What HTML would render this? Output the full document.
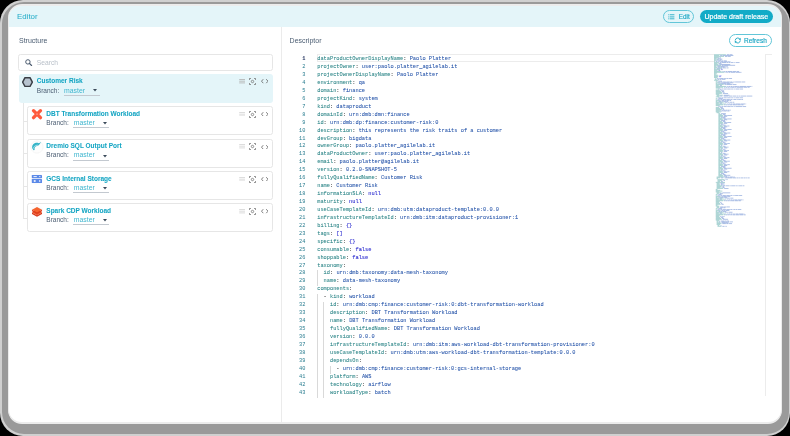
<!DOCTYPE html>
<html><head><meta charset="utf-8">
<style>
*{margin:0;padding:0;box-sizing:border-box}
html,body{width:790px;height:436px;overflow:hidden;background:#000}
body{position:relative;font-family:"Liberation Sans",sans-serif}
.a{position:absolute}
.ring{left:0;top:0;width:790px;height:436px;border-radius:23px;background:#d0d0d0}
.shadow{left:1.5px;top:1.5px;width:787px;height:432px;border-radius:22px;background:#9a9a9a}
.card{left:8px;top:3.5px;width:774px;height:420.5px;border-radius:14px;background:#fff;border:1.5px solid #ececec;border-top-width:2px;border-bottom-width:2px;overflow:hidden}
.hdr{left:0;top:0;width:100%;height:21px;background:#e4f5f9}
.t{position:absolute;white-space:nowrap;line-height:1}
.teal{color:#14a5c3}
.lab{color:#4b5d72}
.btn-o{border:0.8px solid #62c6d8;border-radius:7px}
.btn-f{background:#12abc7;border-radius:7px}
.box{border:1px solid #e6e6e6;border-radius:2.5px;background:#fff}
.row{background:#e4f5f9;border-radius:3px}
.ln{position:absolute;left:281.5px;width:24px;text-align:right;font-family:"Liberation Mono",monospace;font-size:5.32px;line-height:7.94px;color:#2a7d90;white-space:pre}
.ln.cur{color:#1d2d5a;font-weight:bold}
.cl{position:absolute;left:317.2px;font-family:"Liberation Mono",monospace;font-size:5.32px;line-height:7.94px;white-space:pre;color:#333}
.cl .k{color:#2a8486;-webkit-text-stroke:0.05px #2a8486}
.cl .v{color:#2352a8;-webkit-text-stroke:0.05px #2352a8}
.cl .c{color:#2f2fd0;-webkit-text-stroke:0.1px #2f2fd0}
.cl .p{color:#222;-webkit-text-stroke:0.1px #222}
.ig{position:absolute;width:0.6px;background:#d9d9d9}
.ic{position:absolute}
</style></head>
<body>
<div class="a" style="left:0;top:0;width:790px;height:436px;will-change:transform">
<div class="a ring"></div>
<div class="a shadow"></div>
<div class="a card">
  <div class="a hdr"></div>
</div>

<!-- header -->
<div class="t teal" style="left:17px;top:12.9px;font-size:7.9px;color:#22acc8">Editor</div>
<div class="a btn-o" style="left:663.4px;top:10.2px;width:30.6px;height:12.4px"></div>
<svg class="ic" style="left:667.5px;top:13.5px" width="7" height="6" viewBox="0 0 7 6">
  <g stroke="#1aa9c4" stroke-width="0.85">
  <line x1="0.3" y1="0.75" x2="1.1" y2="0.75"/><line x1="1.7" y1="0.75" x2="6.4" y2="0.75"/>
  <line x1="0.3" y1="2.9" x2="1.1" y2="2.9"/><line x1="1.7" y1="2.9" x2="6.4" y2="2.9"/>
  <line x1="0.3" y1="4.8" x2="1.1" y2="4.8"/><line x1="1.7" y1="4.8" x2="6.4" y2="4.8"/></g>
</svg>
<div class="t teal" style="left:678.7px;top:13.6px;font-size:6.4px;font-weight:normal;-webkit-text-stroke:0.12px #1aa9c4">Edit</div>
<div class="a btn-f" style="left:699.8px;top:10px;width:73.3px;height:12.8px"></div>
<div class="t" style="left:704.4px;top:12.8px;font-size:7.05px;color:#fff;-webkit-text-stroke:0.2px #fff">Update draft release</div>

<!-- structure panel -->
<div class="t lab" style="left:19px;top:37.2px;font-size:7px">Structure</div>
<div class="a box" style="left:18px;top:54px;width:255px;height:17px"></div>
<svg class="ic" style="left:25px;top:59.2px" width="7.5" height="7" viewBox="0 0 7.5 7">
  <circle cx="2.9" cy="2.9" r="2.2" fill="none" stroke="#4a5a6e" stroke-width="1"/>
  <line x1="4.5" y1="4.5" x2="6.6" y2="6.5" stroke="#4a5a6e" stroke-width="1.1" stroke-linecap="round"/>
</svg>
<div class="t" style="left:36.8px;top:60.2px;font-size:6.7px;color:#b9c0c9">Search</div>

<div class="a row" style="left:19px;top:74px;width:254px;height:29px"></div>
<svg class="ic" style="left:22px;top:76.6px" width="11" height="10.2" viewBox="0 0 11 10.2">
  <polygon points="3,0.7 8,0.7 10.4,5.1 8,9.5 3,9.5 0.6,5.1" fill="#b7c3cf" stroke="#3a3e45" stroke-width="1.5" stroke-linejoin="round"/>
</svg>
<div class="t teal" style="left:36.8px;top:78.4px;font-size:6.5px;font-weight:bold;-webkit-text-stroke:0.05px #14a5c3">Customer Risk</div>
<div class="t lab" style="left:36.8px;top:88.1px;font-size:6.5px">Branch:</div>
<div class="t teal" style="left:64px;top:88.1px;font-size:6.9px;color:#3fb6cf">master</div>
<svg class="ic" style="left:92.8px;top:88.6px" width="4" height="3" viewBox="0 0 4 3"><polygon points="0,0 4,0 2,2.4" fill="#3b4a5a"/></svg>
<div class="a" style="left:64px;top:94.9px;width:36.2px;height:0.7px;background:#c3c9d0"></div>

<div class="a" style="left:230px;top:74px;width:0;height:0"></div>

<svg class="ic" style="left:238.6px;top:79.00px" width="6.5" height="4.5" viewBox="0 0 6.5 4.5"><g stroke="#b0b0b0" stroke-width="0.8"><line x1="0.2" y1="0.5" x2="6.2" y2="0.5"/><line x1="0.2" y1="2.2" x2="6.2" y2="2.2"/><line x1="0.2" y1="3.9" x2="6.2" y2="3.9"/></g></svg><svg class="ic" style="left:249.4px;top:77.80px" width="7" height="7" viewBox="0 0 7 7"><g fill="none" stroke="#6e6e6e" stroke-width="0.8"><path d="M0.4 2 V0.4 H2 M5 0.4 H6.6 V2 M6.6 5 V6.6 H5 M2 6.6 H0.4 V5"/></g><circle cx="3.5" cy="3.5" r="1.2" fill="none" stroke="#777" stroke-width="0.8"/></svg>
<svg class="ic" style="left:260.6px;top:79.20px" width="7.5" height="4.4" viewBox="0 0 7.5 4.4"><g fill="none" stroke="#5e5e5e" stroke-width="0.8" stroke-linecap="round" stroke-linejoin="round"><path d="M2 0.5 L0.5 2.2 L2 3.9 M5.5 0.5 L7 2.2 L5.5 3.9"/></g></svg>
<div class="a" style="left:23px;top:102.5px;width:0.7px;height:115.5px;background:#e6e6e6"></div>
<div class="a box" style="left:27px;top:106px;width:246px;height:29px"></div>
<div class="a" style="left:23px;top:120.60px;width:4.2px;height:0.7px;background:#e6e6e6"></div>
<svg class="ic" style="left:30px;top:107.00px" width="14" height="14" viewBox="0 0 14 14"><circle cx="7" cy="7" r="6.2" fill="#fbfcfd"/><g stroke="#fe5a3c" stroke-width="3.3" stroke-linecap="round"><line x1="3.5" y1="3.7" x2="10.5" y2="10.7"/><line x1="10.5" y1="3.7" x2="3.5" y2="10.7"/></g><rect x="6.4" y="6.6" width="1.2" height="1" fill="#ffc6b8"/></svg>
<div class="t teal" style="left:46.3px;top:110.80px;font-size:6.5px;font-weight:bold;-webkit-text-stroke:0.05px #14a5c3">DBT Transformation Workload</div>
<div class="t lab" style="left:46.3px;top:119.70px;font-size:6.5px">Branch:</div>
<div class="t teal" style="left:73.8px;top:119.70px;font-size:6.9px;color:#3fb6cf">master</div>
<svg class="ic" style="left:102.5px;top:122.00px" width="4" height="3" viewBox="0 0 4 3"><polygon points="0,0 4,0 2,2.4" fill="#3b4a5a"/></svg>
<div class="a" style="left:73.1px;top:126.90px;width:36.1px;height:0.7px;background:#c3c9d0"></div>
<svg class="ic" style="left:238.6px;top:111.80px" width="6.5" height="4.5" viewBox="0 0 6.5 4.5"><g stroke="#d4d4d4" stroke-width="0.8"><line x1="0.2" y1="0.5" x2="6.2" y2="0.5"/><line x1="0.2" y1="2.2" x2="6.2" y2="2.2"/><line x1="0.2" y1="3.9" x2="6.2" y2="3.9"/></g></svg><svg class="ic" style="left:249.4px;top:110.60px" width="7" height="7" viewBox="0 0 7 7"><g fill="none" stroke="#6e6e6e" stroke-width="0.8"><path d="M0.4 2 V0.4 H2 M5 0.4 H6.6 V2 M6.6 5 V6.6 H5 M2 6.6 H0.4 V5"/></g><circle cx="3.5" cy="3.5" r="1.2" fill="none" stroke="#777" stroke-width="0.8"/></svg>
<svg class="ic" style="left:260.6px;top:112.00px" width="7.5" height="4.4" viewBox="0 0 7.5 4.4"><g fill="none" stroke="#5e5e5e" stroke-width="0.8" stroke-linecap="round" stroke-linejoin="round"><path d="M2 0.5 L0.5 2.2 L2 3.9 M5.5 0.5 L7 2.2 L5.5 3.9"/></g></svg>
<div class="a box" style="left:27px;top:139px;width:246px;height:29px"></div>
<div class="a" style="left:23px;top:153.20px;width:4.2px;height:0.7px;background:#e6e6e6"></div>
<svg class="ic" style="left:30px;top:139.60px" width="14" height="14" viewBox="0 0 14 14"><circle cx="7" cy="7" r="6.2" fill="#fdfdfd" stroke="#ececec" stroke-width="0.5"/><g transform="translate(0,-0.7)"><path d="M3.6 11 C1.6 9.6 1.6 6.4 3.4 4.8 C5 3.4 7.2 3.2 8.8 3.9 L11.2 2.8 L9.9 4.5 C9.2 6 7.6 6.5 6.3 7 C5 7.5 4.3 8.8 4.6 10.6 Z" fill="#36b4c8"/><path d="M3.4 9.2 C3.6 7.6 4.8 6.3 7.6 5.7" stroke="#e6f6f8" stroke-width="0.6" fill="none"/></g></svg>
<div class="t teal" style="left:46.3px;top:143.40px;font-size:6.5px;font-weight:bold;-webkit-text-stroke:0.05px #14a5c3">Dremio SQL Output Port</div>
<div class="t lab" style="left:46.3px;top:152.30px;font-size:6.5px">Branch:</div>
<div class="t teal" style="left:73.8px;top:152.30px;font-size:6.9px;color:#3fb6cf">master</div>
<svg class="ic" style="left:102.5px;top:154.60px" width="4" height="3" viewBox="0 0 4 3"><polygon points="0,0 4,0 2,2.4" fill="#3b4a5a"/></svg>
<div class="a" style="left:73.1px;top:159.50px;width:36.1px;height:0.7px;background:#c3c9d0"></div>
<svg class="ic" style="left:238.6px;top:144.40px" width="6.5" height="4.5" viewBox="0 0 6.5 4.5"><g stroke="#d4d4d4" stroke-width="0.8"><line x1="0.2" y1="0.5" x2="6.2" y2="0.5"/><line x1="0.2" y1="2.2" x2="6.2" y2="2.2"/><line x1="0.2" y1="3.9" x2="6.2" y2="3.9"/></g></svg><svg class="ic" style="left:249.4px;top:143.20px" width="7" height="7" viewBox="0 0 7 7"><g fill="none" stroke="#6e6e6e" stroke-width="0.8"><path d="M0.4 2 V0.4 H2 M5 0.4 H6.6 V2 M6.6 5 V6.6 H5 M2 6.6 H0.4 V5"/></g><circle cx="3.5" cy="3.5" r="1.2" fill="none" stroke="#777" stroke-width="0.8"/></svg>
<svg class="ic" style="left:260.6px;top:144.60px" width="7.5" height="4.4" viewBox="0 0 7.5 4.4"><g fill="none" stroke="#5e5e5e" stroke-width="0.8" stroke-linecap="round" stroke-linejoin="round"><path d="M2 0.5 L0.5 2.2 L2 3.9 M5.5 0.5 L7 2.2 L5.5 3.9"/></g></svg>
<div class="a box" style="left:27px;top:171px;width:246px;height:29px"></div>
<div class="a" style="left:23px;top:185.60px;width:4.2px;height:0.7px;background:#e6e6e6"></div>
<svg class="ic" style="left:30px;top:172.00px" width="14" height="14" viewBox="0 0 14 14"><circle cx="7" cy="7" r="6.2" fill="#fbfcfd"/><rect x="1.8" y="2.9" width="10.2" height="3.3" rx="0.6" fill="#5b89e8"/><rect x="1.8" y="6.9" width="10.2" height="4.2" rx="0.6" fill="#5b89e8"/><g fill="#dfe8fb"><rect x="3.5" y="4" width="3.3" height="1.1"/><rect x="9.2" y="4" width="1.2" height="1.1"/><rect x="3.8" y="8" width="1.8" height="2"/><rect x="9.2" y="8" width="1.1" height="2"/></g></svg>
<div class="t teal" style="left:46.3px;top:175.80px;font-size:6.5px;font-weight:bold;-webkit-text-stroke:0.05px #14a5c3">GCS Internal Storage</div>
<div class="t lab" style="left:46.3px;top:184.70px;font-size:6.5px">Branch:</div>
<div class="t teal" style="left:73.8px;top:184.70px;font-size:6.9px;color:#3fb6cf">master</div>
<svg class="ic" style="left:102.5px;top:187.00px" width="4" height="3" viewBox="0 0 4 3"><polygon points="0,0 4,0 2,2.4" fill="#3b4a5a"/></svg>
<div class="a" style="left:73.1px;top:191.90px;width:36.1px;height:0.7px;background:#c3c9d0"></div>
<svg class="ic" style="left:238.6px;top:176.80px" width="6.5" height="4.5" viewBox="0 0 6.5 4.5"><g stroke="#d4d4d4" stroke-width="0.8"><line x1="0.2" y1="0.5" x2="6.2" y2="0.5"/><line x1="0.2" y1="2.2" x2="6.2" y2="2.2"/><line x1="0.2" y1="3.9" x2="6.2" y2="3.9"/></g></svg><svg class="ic" style="left:249.4px;top:175.60px" width="7" height="7" viewBox="0 0 7 7"><g fill="none" stroke="#6e6e6e" stroke-width="0.8"><path d="M0.4 2 V0.4 H2 M5 0.4 H6.6 V2 M6.6 5 V6.6 H5 M2 6.6 H0.4 V5"/></g><circle cx="3.5" cy="3.5" r="1.2" fill="none" stroke="#777" stroke-width="0.8"/></svg>
<svg class="ic" style="left:260.6px;top:177.00px" width="7.5" height="4.4" viewBox="0 0 7.5 4.4"><g fill="none" stroke="#5e5e5e" stroke-width="0.8" stroke-linecap="round" stroke-linejoin="round"><path d="M2 0.5 L0.5 2.2 L2 3.9 M5.5 0.5 L7 2.2 L5.5 3.9"/></g></svg>
<div class="a box" style="left:27px;top:203px;width:246px;height:29px"></div>
<div class="a" style="left:23px;top:217.90px;width:4.2px;height:0.7px;background:#e6e6e6"></div>
<svg class="ic" style="left:30px;top:204.30px" width="14" height="14" viewBox="0 0 14 14"><circle cx="7" cy="7" r="6.2" fill="#fbfcfd"/><path d="M7 5.6 L12 8.4 L7 11.2 L2 8.4 Z" fill="#f0552a"/><path d="M2 8.4 L7 11.2 L12 8.4 L12 9.9 L7 12.8 L2 9.9 Z" fill="#d9391a"/><path d="M7 2.9 L12 5.8 L7 8.6 L2 5.8 Z" fill="#f5642f"/><path d="M2 5.8 L7 8.6 L12 5.8 L12 7.2 L7 10 L2 7.2 Z" fill="#dd3d1c"/></svg>
<div class="t teal" style="left:46.3px;top:208.10px;font-size:6.5px;font-weight:bold;-webkit-text-stroke:0.05px #14a5c3">Spark CDP Workload</div>
<div class="t lab" style="left:46.3px;top:217.00px;font-size:6.5px">Branch:</div>
<div class="t teal" style="left:73.8px;top:217.00px;font-size:6.9px;color:#3fb6cf">master</div>
<svg class="ic" style="left:102.5px;top:219.30px" width="4" height="3" viewBox="0 0 4 3"><polygon points="0,0 4,0 2,2.4" fill="#3b4a5a"/></svg>
<div class="a" style="left:73.1px;top:224.20px;width:36.1px;height:0.7px;background:#c3c9d0"></div>
<svg class="ic" style="left:238.6px;top:209.10px" width="6.5" height="4.5" viewBox="0 0 6.5 4.5"><g stroke="#d4d4d4" stroke-width="0.8"><line x1="0.2" y1="0.5" x2="6.2" y2="0.5"/><line x1="0.2" y1="2.2" x2="6.2" y2="2.2"/><line x1="0.2" y1="3.9" x2="6.2" y2="3.9"/></g></svg><svg class="ic" style="left:249.4px;top:207.90px" width="7" height="7" viewBox="0 0 7 7"><g fill="none" stroke="#6e6e6e" stroke-width="0.8"><path d="M0.4 2 V0.4 H2 M5 0.4 H6.6 V2 M6.6 5 V6.6 H5 M2 6.6 H0.4 V5"/></g><circle cx="3.5" cy="3.5" r="1.2" fill="none" stroke="#777" stroke-width="0.8"/></svg>
<svg class="ic" style="left:260.6px;top:209.30px" width="7.5" height="4.4" viewBox="0 0 7.5 4.4"><g fill="none" stroke="#5e5e5e" stroke-width="0.8" stroke-linecap="round" stroke-linejoin="round"><path d="M2 0.5 L0.5 2.2 L2 3.9 M5.5 0.5 L7 2.2 L5.5 3.9"/></g></svg>

<!-- divider -->
<div class="a" style="left:281.2px;top:26.5px;width:0.8px;height:396px;background:#ebebeb"></div>

<!-- descriptor -->
<div class="t lab" style="left:289.6px;top:37.2px;font-size:7px">Descriptor</div>
<div class="a btn-o" style="left:728.9px;top:34.2px;width:43.1px;height:12.5px"></div>
<svg class="ic" style="left:734px;top:37px" width="7.5" height="7" viewBox="0 0 7.5 7">
  <path d="M1.2 3.2 A2.6 2.6 0 0 1 6 2.2 M6.3 3.8 A2.6 2.6 0 0 1 1.5 4.8" fill="none" stroke="#1ba8c3" stroke-width="0.9" stroke-linecap="round"/>
  <polygon points="6.6,0.8 6.6,3 4.6,2.6" fill="#1ba8c3"/>
  <polygon points="0.9,6.2 0.9,4 2.9,4.4" fill="#1ba8c3"/>
</svg>
<div class="t teal" style="left:744px;top:37.8px;font-size:6.5px;-webkit-text-stroke:0.15px #20aac6">Refresh</div>

<!-- editor -->
<div class="a" style="left:317px;top:54px;width:397px;height:8px;border:1px solid #ececec;border-right:none"></div>
<div class="a" style="left:765.3px;top:54.2px;width:0.7px;height:342px;background:#ececec"></div>
<div class="a" style="left:765.3px;top:54.2px;width:7px;height:0.7px;background:#ececec"></div>
<div class="a" style="left:0;top:0;width:790px;height:436px;will-change:transform">
<div class="ig" style="left:317.0px;top:270.48px;height:15.88px"></div>
<div class="ig" style="left:317.0px;top:294.30px;height:103.22px"></div>
<div class="ig" style="left:323.2px;top:302.24px;height:95.28px"></div>
<div class="ig" style="left:329.6px;top:365.76px;height:7.94px"></div>
<div class="ln cur" style="top:56.10px">1</div>
<div class="cl" style="top:56.10px"><span class="k">dataProductOwnerDisplayName</span><span class="p">:</span> <span class="v">Paolo Platter</span></div>
<div class="ln" style="top:64.04px">2</div>
<div class="cl" style="top:64.04px"><span class="k">projectOwner</span><span class="p">:</span> <span class="v">user:paolo.platter_agilelab.it</span></div>
<div class="ln" style="top:71.98px">3</div>
<div class="cl" style="top:71.98px"><span class="k">projectOwnerDisplayName</span><span class="p">:</span> <span class="v">Paolo Platter</span></div>
<div class="ln" style="top:79.92px">4</div>
<div class="cl" style="top:79.92px"><span class="k">environment</span><span class="p">:</span> <span class="v">qa</span></div>
<div class="ln" style="top:87.86px">5</div>
<div class="cl" style="top:87.86px"><span class="k">domain</span><span class="p">:</span> <span class="v">finance</span></div>
<div class="ln" style="top:95.80px">6</div>
<div class="cl" style="top:95.80px"><span class="k">projectKind</span><span class="p">:</span> <span class="v">system</span></div>
<div class="ln" style="top:103.74px">7</div>
<div class="cl" style="top:103.74px"><span class="k">kind</span><span class="p">:</span> <span class="v">dataproduct</span></div>
<div class="ln" style="top:111.68px">8</div>
<div class="cl" style="top:111.68px"><span class="k">domainId</span><span class="p">:</span> <span class="v">urn:dmb:dmn:finance</span></div>
<div class="ln" style="top:119.62px">9</div>
<div class="cl" style="top:119.62px"><span class="k">id</span><span class="p">:</span> <span class="v">urn:dmb:dp:finance:customer-risk:0</span></div>
<div class="ln" style="top:127.56px">10</div>
<div class="cl" style="top:127.56px"><span class="k">description</span><span class="p">:</span> <span class="v">this represents the risk traits of a customer</span></div>
<div class="ln" style="top:135.50px">11</div>
<div class="cl" style="top:135.50px"><span class="k">devGroup</span><span class="p">:</span> <span class="v">bigdata</span></div>
<div class="ln" style="top:143.44px">12</div>
<div class="cl" style="top:143.44px"><span class="k">ownerGroup</span><span class="p">:</span> <span class="v">paolo.platter_agilelab.it</span></div>
<div class="ln" style="top:151.38px">13</div>
<div class="cl" style="top:151.38px"><span class="k">dataProductOwner</span><span class="p">:</span> <span class="v">user:paolo.platter_agilelab.it</span></div>
<div class="ln" style="top:159.32px">14</div>
<div class="cl" style="top:159.32px"><span class="k">email</span><span class="p">:</span> <span class="v">paolo.platter@agilelab.it</span></div>
<div class="ln" style="top:167.26px">15</div>
<div class="cl" style="top:167.26px"><span class="k">version</span><span class="p">:</span> <span class="v">0.2.0-SNAPSHOT-5</span></div>
<div class="ln" style="top:175.20px">16</div>
<div class="cl" style="top:175.20px"><span class="k">fullyQualifiedName</span><span class="p">:</span> <span class="v">Customer Risk</span></div>
<div class="ln" style="top:183.14px">17</div>
<div class="cl" style="top:183.14px"><span class="k">name</span><span class="p">:</span> <span class="v">Customer Risk</span></div>
<div class="ln" style="top:191.08px">18</div>
<div class="cl" style="top:191.08px"><span class="k">informationSLA</span><span class="p">:</span> <span class="c">null</span></div>
<div class="ln" style="top:199.02px">19</div>
<div class="cl" style="top:199.02px"><span class="k">maturity</span><span class="p">:</span> <span class="c">null</span></div>
<div class="ln" style="top:206.96px">20</div>
<div class="cl" style="top:206.96px"><span class="k">useCaseTemplateId</span><span class="p">:</span> <span class="v">urn:dmb:utm:dataproduct-template:0.0.0</span></div>
<div class="ln" style="top:214.90px">21</div>
<div class="cl" style="top:214.90px"><span class="k">infrastructureTemplateId</span><span class="p">:</span> <span class="v">urn:dmb:itm:dataproduct-provisioner:1</span></div>
<div class="ln" style="top:222.84px">22</div>
<div class="cl" style="top:222.84px"><span class="k">billing</span><span class="p">:</span> <span class="c">{}</span></div>
<div class="ln" style="top:230.78px">23</div>
<div class="cl" style="top:230.78px"><span class="k">tags</span><span class="p">:</span> <span class="c">[]</span></div>
<div class="ln" style="top:238.72px">24</div>
<div class="cl" style="top:238.72px"><span class="k">specific</span><span class="p">:</span> <span class="c">{}</span></div>
<div class="ln" style="top:246.66px">25</div>
<div class="cl" style="top:246.66px"><span class="k">consumable</span><span class="p">:</span> <span class="c">false</span></div>
<div class="ln" style="top:254.60px">26</div>
<div class="cl" style="top:254.60px"><span class="k">shoppable</span><span class="p">:</span> <span class="c">false</span></div>
<div class="ln" style="top:262.54px">27</div>
<div class="cl" style="top:262.54px"><span class="k">taxonomy</span><span class="p">:</span></div>
<div class="ln" style="top:270.48px">28</div>
<div class="cl" style="top:270.48px">&nbsp;&nbsp;<span class="k">id</span><span class="p">:</span> <span class="v">urn:dmb:taxonomy:data-mesh-taxonomy</span></div>
<div class="ln" style="top:278.42px">29</div>
<div class="cl" style="top:278.42px">&nbsp;&nbsp;<span class="k">name</span><span class="p">:</span> <span class="v">data-mesh-taxonomy</span></div>
<div class="ln" style="top:286.36px">30</div>
<div class="cl" style="top:286.36px"><span class="k">components</span><span class="p">:</span></div>
<div class="ln" style="top:294.30px">31</div>
<div class="cl" style="top:294.30px">&nbsp;&nbsp;<span class="p">- </span><span class="k">kind</span><span class="p">:</span> <span class="v">workload</span></div>
<div class="ln" style="top:302.24px">32</div>
<div class="cl" style="top:302.24px">&nbsp;&nbsp;&nbsp;&nbsp;<span class="k">id</span><span class="p">:</span> <span class="v">urn:dmb:cmp:finance:customer-risk:0:dbt-transformation-workload</span></div>
<div class="ln" style="top:310.18px">33</div>
<div class="cl" style="top:310.18px">&nbsp;&nbsp;&nbsp;&nbsp;<span class="k">description</span><span class="p">:</span> <span class="v">DBT Transformation Workload</span></div>
<div class="ln" style="top:318.12px">34</div>
<div class="cl" style="top:318.12px">&nbsp;&nbsp;&nbsp;&nbsp;<span class="k">name</span><span class="p">:</span> <span class="v">DBT Transformation Workload</span></div>
<div class="ln" style="top:326.06px">35</div>
<div class="cl" style="top:326.06px">&nbsp;&nbsp;&nbsp;&nbsp;<span class="k">fullyQualifiedName</span><span class="p">:</span> <span class="v">DBT Transformation Workload</span></div>
<div class="ln" style="top:334.00px">36</div>
<div class="cl" style="top:334.00px">&nbsp;&nbsp;&nbsp;&nbsp;<span class="k">version</span><span class="p">:</span> <span class="v">0.0.0</span></div>
<div class="ln" style="top:341.94px">37</div>
<div class="cl" style="top:341.94px">&nbsp;&nbsp;&nbsp;&nbsp;<span class="k">infrastructureTemplateId</span><span class="p">:</span> <span class="v">urn:dmb:itm:aws-workload-dbt-transformation-provisioner:0</span></div>
<div class="ln" style="top:349.88px">38</div>
<div class="cl" style="top:349.88px">&nbsp;&nbsp;&nbsp;&nbsp;<span class="k">useCaseTemplateId</span><span class="p">:</span> <span class="v">urn:dmb:utm:aws-workload-dbt-transformation-template:0.0.0</span></div>
<div class="ln" style="top:357.82px">39</div>
<div class="cl" style="top:357.82px">&nbsp;&nbsp;&nbsp;&nbsp;<span class="k">dependsOn</span><span class="p">:</span></div>
<div class="ln" style="top:365.76px">40</div>
<div class="cl" style="top:365.76px">&nbsp;&nbsp;&nbsp;&nbsp;&nbsp;&nbsp;<span class="p">- </span><span class="v">urn:dmb:cmp:finance:customer-risk:0:gcs-internal-storage</span></div>
<div class="ln" style="top:373.70px">41</div>
<div class="cl" style="top:373.70px">&nbsp;&nbsp;&nbsp;&nbsp;<span class="k">platform</span><span class="p">:</span> <span class="v">AWS</span></div>
<div class="ln" style="top:381.64px">42</div>
<div class="cl" style="top:381.64px">&nbsp;&nbsp;&nbsp;&nbsp;<span class="k">technology</span><span class="p">:</span> <span class="v">airflow</span></div>
<div class="ln" style="top:389.58px">43</div>
<div class="cl" style="top:389.58px">&nbsp;&nbsp;&nbsp;&nbsp;<span class="k">workloadType</span><span class="p">:</span> <span class="v">batch</span></div>
</div>
<svg class="ic" style="left:0;top:0" width="790" height="436"><rect x="714.00" y="54.30" width="11.88" height="0.8" fill="#3f9e9e" fill-opacity="0.5"/><rect x="726.76" y="54.30" width="2.20" height="0.8" fill="#3f6cc4" fill-opacity="0.5"/><rect x="729.40" y="54.30" width="3.08" height="0.8" fill="#3f6cc4" fill-opacity="0.5"/><rect x="714.00" y="55.18" width="5.28" height="0.8" fill="#3f9e9e" fill-opacity="0.5"/><rect x="720.16" y="55.18" width="1.76" height="0.8" fill="#3f6cc4" fill-opacity="0.5"/><rect x="722.36" y="55.18" width="11.00" height="0.8" fill="#3f6cc4" fill-opacity="0.5"/><rect x="714.00" y="56.06" width="10.12" height="0.8" fill="#3f9e9e" fill-opacity="0.5"/><rect x="725.00" y="56.06" width="2.20" height="0.8" fill="#3f6cc4" fill-opacity="0.5"/><rect x="727.64" y="56.06" width="3.08" height="0.8" fill="#3f6cc4" fill-opacity="0.5"/><rect x="714.00" y="56.94" width="4.84" height="0.8" fill="#3f9e9e" fill-opacity="0.5"/><rect x="719.72" y="56.94" width="0.88" height="0.8" fill="#3f6cc4" fill-opacity="0.5"/><rect x="714.00" y="57.82" width="2.64" height="0.8" fill="#3f9e9e" fill-opacity="0.5"/><rect x="717.52" y="57.82" width="3.08" height="0.8" fill="#3f6cc4" fill-opacity="0.5"/><rect x="714.00" y="58.70" width="4.84" height="0.8" fill="#3f9e9e" fill-opacity="0.5"/><rect x="719.72" y="58.70" width="2.64" height="0.8" fill="#3f6cc4" fill-opacity="0.5"/><rect x="714.00" y="59.58" width="1.76" height="0.8" fill="#3f9e9e" fill-opacity="0.5"/><rect x="716.64" y="59.58" width="4.84" height="0.8" fill="#3f6cc4" fill-opacity="0.5"/><rect x="714.00" y="60.46" width="3.52" height="0.8" fill="#3f9e9e" fill-opacity="0.5"/><rect x="718.40" y="60.46" width="1.32" height="0.8" fill="#3f6cc4" fill-opacity="0.5"/><rect x="720.16" y="60.46" width="1.32" height="0.8" fill="#3f6cc4" fill-opacity="0.5"/><rect x="721.92" y="60.46" width="1.32" height="0.8" fill="#3f6cc4" fill-opacity="0.5"/><rect x="723.68" y="60.46" width="3.08" height="0.8" fill="#3f6cc4" fill-opacity="0.5"/><rect x="714.00" y="61.34" width="0.88" height="0.8" fill="#3f9e9e" fill-opacity="0.5"/><rect x="715.76" y="61.34" width="1.32" height="0.8" fill="#3f6cc4" fill-opacity="0.5"/><rect x="717.52" y="61.34" width="1.32" height="0.8" fill="#3f6cc4" fill-opacity="0.5"/><rect x="719.28" y="61.34" width="0.88" height="0.8" fill="#3f6cc4" fill-opacity="0.5"/><rect x="720.60" y="61.34" width="3.08" height="0.8" fill="#3f6cc4" fill-opacity="0.5"/><rect x="724.12" y="61.34" width="3.52" height="0.8" fill="#3f6cc4" fill-opacity="0.5"/><rect x="728.08" y="61.34" width="1.76" height="0.8" fill="#3f6cc4" fill-opacity="0.5"/><rect x="730.28" y="61.34" width="0.44" height="0.8" fill="#3f6cc4" fill-opacity="0.5"/><rect x="714.00" y="62.22" width="4.84" height="0.8" fill="#3f9e9e" fill-opacity="0.5"/><rect x="719.72" y="62.22" width="1.76" height="0.8" fill="#3f6cc4" fill-opacity="0.5"/><rect x="721.92" y="62.22" width="4.40" height="0.8" fill="#3f6cc4" fill-opacity="0.5"/><rect x="726.76" y="62.22" width="1.32" height="0.8" fill="#3f6cc4" fill-opacity="0.5"/><rect x="728.52" y="62.22" width="1.76" height="0.8" fill="#3f6cc4" fill-opacity="0.5"/><rect x="730.72" y="62.22" width="2.64" height="0.8" fill="#3f6cc4" fill-opacity="0.5"/><rect x="733.80" y="62.22" width="0.88" height="0.8" fill="#3f6cc4" fill-opacity="0.5"/><rect x="735.12" y="62.22" width="0.44" height="0.8" fill="#3f6cc4" fill-opacity="0.5"/><rect x="736.00" y="62.22" width="3.52" height="0.8" fill="#3f6cc4" fill-opacity="0.5"/><rect x="714.00" y="63.10" width="3.52" height="0.8" fill="#3f9e9e" fill-opacity="0.5"/><rect x="718.40" y="63.10" width="3.08" height="0.8" fill="#3f6cc4" fill-opacity="0.5"/><rect x="714.00" y="63.98" width="4.40" height="0.8" fill="#3f9e9e" fill-opacity="0.5"/><rect x="719.28" y="63.98" width="11.00" height="0.8" fill="#3f6cc4" fill-opacity="0.5"/><rect x="714.00" y="64.86" width="7.04" height="0.8" fill="#3f9e9e" fill-opacity="0.5"/><rect x="721.92" y="64.86" width="1.76" height="0.8" fill="#3f6cc4" fill-opacity="0.5"/><rect x="724.12" y="64.86" width="11.00" height="0.8" fill="#3f6cc4" fill-opacity="0.5"/><rect x="714.00" y="65.74" width="2.20" height="0.8" fill="#3f9e9e" fill-opacity="0.5"/><rect x="717.08" y="65.74" width="11.00" height="0.8" fill="#3f6cc4" fill-opacity="0.5"/><rect x="714.00" y="66.62" width="3.08" height="0.8" fill="#3f9e9e" fill-opacity="0.5"/><rect x="717.96" y="66.62" width="2.20" height="0.8" fill="#3f6cc4" fill-opacity="0.5"/><rect x="720.60" y="66.62" width="3.52" height="0.8" fill="#3f6cc4" fill-opacity="0.5"/><rect x="724.56" y="66.62" width="0.44" height="0.8" fill="#3f6cc4" fill-opacity="0.5"/><rect x="714.00" y="67.50" width="7.92" height="0.8" fill="#3f9e9e" fill-opacity="0.5"/><rect x="722.80" y="67.50" width="3.52" height="0.8" fill="#3f6cc4" fill-opacity="0.5"/><rect x="726.76" y="67.50" width="1.76" height="0.8" fill="#3f6cc4" fill-opacity="0.5"/><rect x="714.00" y="68.38" width="1.76" height="0.8" fill="#3f9e9e" fill-opacity="0.5"/><rect x="716.64" y="68.38" width="3.52" height="0.8" fill="#3f6cc4" fill-opacity="0.5"/><rect x="720.60" y="68.38" width="1.76" height="0.8" fill="#3f6cc4" fill-opacity="0.5"/><rect x="714.00" y="69.26" width="6.16" height="0.8" fill="#3f9e9e" fill-opacity="0.5"/><rect x="721.04" y="69.26" width="1.76" height="0.8" fill="#3a3ae0" fill-opacity="0.5"/><rect x="714.00" y="70.14" width="3.52" height="0.8" fill="#3f9e9e" fill-opacity="0.5"/><rect x="718.40" y="70.14" width="1.76" height="0.8" fill="#3a3ae0" fill-opacity="0.5"/><rect x="714.00" y="71.02" width="7.48" height="0.8" fill="#3f9e9e" fill-opacity="0.5"/><rect x="722.36" y="71.02" width="1.32" height="0.8" fill="#3f6cc4" fill-opacity="0.5"/><rect x="724.12" y="71.02" width="1.32" height="0.8" fill="#3f6cc4" fill-opacity="0.5"/><rect x="725.88" y="71.02" width="1.32" height="0.8" fill="#3f6cc4" fill-opacity="0.5"/><rect x="727.64" y="71.02" width="4.84" height="0.8" fill="#3f6cc4" fill-opacity="0.5"/><rect x="732.92" y="71.02" width="3.52" height="0.8" fill="#3f6cc4" fill-opacity="0.5"/><rect x="736.88" y="71.02" width="2.20" height="0.8" fill="#3f6cc4" fill-opacity="0.5"/><rect x="714.00" y="71.90" width="10.56" height="0.8" fill="#3f9e9e" fill-opacity="0.5"/><rect x="725.44" y="71.90" width="1.32" height="0.8" fill="#3f6cc4" fill-opacity="0.5"/><rect x="727.20" y="71.90" width="1.32" height="0.8" fill="#3f6cc4" fill-opacity="0.5"/><rect x="728.96" y="71.90" width="1.32" height="0.8" fill="#3f6cc4" fill-opacity="0.5"/><rect x="730.72" y="71.90" width="4.84" height="0.8" fill="#3f6cc4" fill-opacity="0.5"/><rect x="736.00" y="71.90" width="4.84" height="0.8" fill="#3f6cc4" fill-opacity="0.5"/><rect x="741.28" y="71.90" width="0.44" height="0.8" fill="#3f6cc4" fill-opacity="0.5"/><rect x="714.00" y="72.78" width="3.08" height="0.8" fill="#3f9e9e" fill-opacity="0.5"/><rect x="714.00" y="73.66" width="1.76" height="0.8" fill="#3f9e9e" fill-opacity="0.5"/><rect x="714.00" y="74.54" width="3.52" height="0.8" fill="#3f9e9e" fill-opacity="0.5"/><rect x="714.00" y="75.42" width="4.40" height="0.8" fill="#3f9e9e" fill-opacity="0.5"/><rect x="719.28" y="75.42" width="2.20" height="0.8" fill="#3a3ae0" fill-opacity="0.5"/><rect x="714.00" y="76.30" width="3.96" height="0.8" fill="#3f9e9e" fill-opacity="0.5"/><rect x="718.84" y="76.30" width="2.20" height="0.8" fill="#3a3ae0" fill-opacity="0.5"/><rect x="714.00" y="77.18" width="3.52" height="0.8" fill="#3f9e9e" fill-opacity="0.5"/><rect x="714.88" y="78.06" width="0.88" height="0.8" fill="#3f9e9e" fill-opacity="0.5"/><rect x="716.64" y="78.06" width="1.32" height="0.8" fill="#3f6cc4" fill-opacity="0.5"/><rect x="718.40" y="78.06" width="1.32" height="0.8" fill="#3f6cc4" fill-opacity="0.5"/><rect x="720.16" y="78.06" width="3.52" height="0.8" fill="#3f6cc4" fill-opacity="0.5"/><rect x="724.12" y="78.06" width="1.76" height="0.8" fill="#3f6cc4" fill-opacity="0.5"/><rect x="726.32" y="78.06" width="1.76" height="0.8" fill="#3f6cc4" fill-opacity="0.5"/><rect x="728.52" y="78.06" width="3.52" height="0.8" fill="#3f6cc4" fill-opacity="0.5"/><rect x="714.88" y="78.94" width="1.76" height="0.8" fill="#3f9e9e" fill-opacity="0.5"/><rect x="717.52" y="78.94" width="1.76" height="0.8" fill="#3f6cc4" fill-opacity="0.5"/><rect x="719.72" y="78.94" width="1.76" height="0.8" fill="#3f6cc4" fill-opacity="0.5"/><rect x="721.92" y="78.94" width="3.52" height="0.8" fill="#3f6cc4" fill-opacity="0.5"/><rect x="714.00" y="79.82" width="4.40" height="0.8" fill="#3f9e9e" fill-opacity="0.5"/><rect x="715.76" y="80.70" width="1.76" height="0.8" fill="#3f9e9e" fill-opacity="0.5"/><rect x="718.40" y="80.70" width="3.52" height="0.8" fill="#3f6cc4" fill-opacity="0.5"/><rect x="715.76" y="81.58" width="0.88" height="0.8" fill="#3f9e9e" fill-opacity="0.5"/><rect x="717.52" y="81.58" width="1.32" height="0.8" fill="#3f6cc4" fill-opacity="0.5"/><rect x="719.28" y="81.58" width="1.32" height="0.8" fill="#3f6cc4" fill-opacity="0.5"/><rect x="721.04" y="81.58" width="1.32" height="0.8" fill="#3f6cc4" fill-opacity="0.5"/><rect x="722.80" y="81.58" width="3.08" height="0.8" fill="#3f6cc4" fill-opacity="0.5"/><rect x="726.32" y="81.58" width="3.52" height="0.8" fill="#3f6cc4" fill-opacity="0.5"/><rect x="730.28" y="81.58" width="1.76" height="0.8" fill="#3f6cc4" fill-opacity="0.5"/><rect x="732.48" y="81.58" width="0.44" height="0.8" fill="#3f6cc4" fill-opacity="0.5"/><rect x="733.36" y="81.58" width="1.32" height="0.8" fill="#3f6cc4" fill-opacity="0.5"/><rect x="735.12" y="81.58" width="6.16" height="0.8" fill="#3f6cc4" fill-opacity="0.5"/><rect x="741.72" y="81.58" width="3.52" height="0.8" fill="#3f6cc4" fill-opacity="0.5"/><rect x="715.76" y="82.46" width="4.84" height="0.8" fill="#3f9e9e" fill-opacity="0.5"/><rect x="721.48" y="82.46" width="1.32" height="0.8" fill="#3f6cc4" fill-opacity="0.5"/><rect x="723.24" y="82.46" width="6.16" height="0.8" fill="#3f6cc4" fill-opacity="0.5"/><rect x="729.84" y="82.46" width="3.52" height="0.8" fill="#3f6cc4" fill-opacity="0.5"/><rect x="715.76" y="83.34" width="1.76" height="0.8" fill="#3f9e9e" fill-opacity="0.5"/><rect x="718.40" y="83.34" width="1.32" height="0.8" fill="#3f6cc4" fill-opacity="0.5"/><rect x="720.16" y="83.34" width="6.16" height="0.8" fill="#3f6cc4" fill-opacity="0.5"/><rect x="726.76" y="83.34" width="3.52" height="0.8" fill="#3f6cc4" fill-opacity="0.5"/><rect x="715.76" y="84.22" width="7.92" height="0.8" fill="#3f9e9e" fill-opacity="0.5"/><rect x="724.56" y="84.22" width="1.32" height="0.8" fill="#3f6cc4" fill-opacity="0.5"/><rect x="726.32" y="84.22" width="6.16" height="0.8" fill="#3f6cc4" fill-opacity="0.5"/><rect x="732.92" y="84.22" width="3.52" height="0.8" fill="#3f6cc4" fill-opacity="0.5"/><rect x="715.76" y="85.10" width="3.08" height="0.8" fill="#3f9e9e" fill-opacity="0.5"/><rect x="719.72" y="85.10" width="2.20" height="0.8" fill="#3f6cc4" fill-opacity="0.5"/><rect x="715.76" y="85.98" width="10.56" height="0.8" fill="#3f9e9e" fill-opacity="0.5"/><rect x="727.20" y="85.98" width="1.32" height="0.8" fill="#3f6cc4" fill-opacity="0.5"/><rect x="728.96" y="85.98" width="1.32" height="0.8" fill="#3f6cc4" fill-opacity="0.5"/><rect x="730.72" y="85.98" width="1.32" height="0.8" fill="#3f6cc4" fill-opacity="0.5"/><rect x="732.48" y="85.98" width="1.32" height="0.8" fill="#3f6cc4" fill-opacity="0.5"/><rect x="734.24" y="85.98" width="3.52" height="0.8" fill="#3f6cc4" fill-opacity="0.5"/><rect x="738.20" y="85.98" width="1.32" height="0.8" fill="#3f6cc4" fill-opacity="0.5"/><rect x="739.96" y="85.98" width="6.16" height="0.8" fill="#3f6cc4" fill-opacity="0.5"/><rect x="746.56" y="85.98" width="4.84" height="0.8" fill="#3f6cc4" fill-opacity="0.5"/><rect x="751.84" y="85.98" width="0.44" height="0.8" fill="#3f6cc4" fill-opacity="0.5"/><rect x="715.76" y="86.86" width="7.48" height="0.8" fill="#3f9e9e" fill-opacity="0.5"/><rect x="724.12" y="86.86" width="1.32" height="0.8" fill="#3f6cc4" fill-opacity="0.5"/><rect x="725.88" y="86.86" width="1.32" height="0.8" fill="#3f6cc4" fill-opacity="0.5"/><rect x="727.64" y="86.86" width="1.32" height="0.8" fill="#3f6cc4" fill-opacity="0.5"/><rect x="729.40" y="86.86" width="1.32" height="0.8" fill="#3f6cc4" fill-opacity="0.5"/><rect x="731.16" y="86.86" width="3.52" height="0.8" fill="#3f6cc4" fill-opacity="0.5"/><rect x="735.12" y="86.86" width="1.32" height="0.8" fill="#3f6cc4" fill-opacity="0.5"/><rect x="736.88" y="86.86" width="6.16" height="0.8" fill="#3f6cc4" fill-opacity="0.5"/><rect x="743.48" y="86.86" width="3.52" height="0.8" fill="#3f6cc4" fill-opacity="0.5"/><rect x="747.44" y="86.86" width="2.20" height="0.8" fill="#3f6cc4" fill-opacity="0.5"/><rect x="715.76" y="87.74" width="3.96" height="0.8" fill="#3f9e9e" fill-opacity="0.5"/><rect x="718.40" y="88.62" width="1.32" height="0.8" fill="#3f6cc4" fill-opacity="0.5"/><rect x="720.16" y="88.62" width="1.32" height="0.8" fill="#3f6cc4" fill-opacity="0.5"/><rect x="721.92" y="88.62" width="1.32" height="0.8" fill="#3f6cc4" fill-opacity="0.5"/><rect x="723.68" y="88.62" width="3.08" height="0.8" fill="#3f6cc4" fill-opacity="0.5"/><rect x="727.20" y="88.62" width="3.52" height="0.8" fill="#3f6cc4" fill-opacity="0.5"/><rect x="731.16" y="88.62" width="1.76" height="0.8" fill="#3f6cc4" fill-opacity="0.5"/><rect x="733.36" y="88.62" width="0.44" height="0.8" fill="#3f6cc4" fill-opacity="0.5"/><rect x="734.24" y="88.62" width="1.32" height="0.8" fill="#3f6cc4" fill-opacity="0.5"/><rect x="736.00" y="88.62" width="3.52" height="0.8" fill="#3f6cc4" fill-opacity="0.5"/><rect x="739.96" y="88.62" width="3.08" height="0.8" fill="#3f6cc4" fill-opacity="0.5"/><rect x="715.76" y="89.50" width="3.52" height="0.8" fill="#3f9e9e" fill-opacity="0.5"/><rect x="720.16" y="89.50" width="1.32" height="0.8" fill="#3f6cc4" fill-opacity="0.5"/><rect x="715.76" y="90.38" width="4.40" height="0.8" fill="#3f9e9e" fill-opacity="0.5"/><rect x="721.04" y="90.38" width="3.08" height="0.8" fill="#3f6cc4" fill-opacity="0.5"/><rect x="715.76" y="91.26" width="5.28" height="0.8" fill="#3f9e9e" fill-opacity="0.5"/><rect x="721.92" y="91.26" width="2.20" height="0.8" fill="#3f6cc4" fill-opacity="0.5"/><rect x="715.76" y="92.14" width="6.60" height="0.8" fill="#3f9e9e" fill-opacity="0.5"/><rect x="723.24" y="92.14" width="1.32" height="0.8" fill="#3f6cc4" fill-opacity="0.5"/><rect x="715.76" y="93.02" width="6.16" height="0.8" fill="#3f9e9e" fill-opacity="0.5"/><rect x="722.80" y="93.02" width="5.28" height="0.8" fill="#3f6cc4" fill-opacity="0.5"/><rect x="715.76" y="93.90" width="3.52" height="0.8" fill="#3f9e9e" fill-opacity="0.5"/><rect x="716.64" y="94.78" width="6.16" height="0.8" fill="#3f9e9e" fill-opacity="0.5"/><rect x="723.68" y="94.78" width="5.72" height="0.8" fill="#3f6cc4" fill-opacity="0.5"/><rect x="716.64" y="95.66" width="2.64" height="0.8" fill="#3f9e9e" fill-opacity="0.5"/><rect x="720.16" y="95.66" width="2.20" height="0.8" fill="#3f6cc4" fill-opacity="0.5"/><rect x="723.68" y="95.66" width="4.40" height="0.8" fill="#3f6cc4" fill-opacity="0.5"/><rect x="728.52" y="95.66" width="3.52" height="0.8" fill="#3f6cc4" fill-opacity="0.5"/><rect x="732.48" y="95.66" width="3.52" height="0.8" fill="#3f6cc4" fill-opacity="0.5"/><rect x="736.44" y="95.66" width="1.76" height="0.8" fill="#3f6cc4" fill-opacity="0.5"/><rect x="738.64" y="95.66" width="1.32" height="0.8" fill="#3f6cc4" fill-opacity="0.5"/><rect x="740.40" y="95.66" width="6.16" height="0.8" fill="#3f6cc4" fill-opacity="0.5"/><rect x="747.00" y="95.66" width="5.28" height="0.8" fill="#3f6cc4" fill-opacity="0.5"/><rect x="715.76" y="96.54" width="3.96" height="0.8" fill="#3f9e9e" fill-opacity="0.5"/><rect x="718.40" y="97.42" width="1.32" height="0.8" fill="#3f6cc4" fill-opacity="0.5"/><rect x="720.16" y="97.42" width="1.32" height="0.8" fill="#3f6cc4" fill-opacity="0.5"/><rect x="721.92" y="97.42" width="1.32" height="0.8" fill="#3f6cc4" fill-opacity="0.5"/><rect x="723.68" y="97.42" width="3.08" height="0.8" fill="#3f6cc4" fill-opacity="0.5"/><rect x="727.20" y="97.42" width="3.52" height="0.8" fill="#3f6cc4" fill-opacity="0.5"/><rect x="731.16" y="97.42" width="1.76" height="0.8" fill="#3f6cc4" fill-opacity="0.5"/><rect x="733.36" y="97.42" width="0.44" height="0.8" fill="#3f6cc4" fill-opacity="0.5"/><rect x="734.24" y="97.42" width="1.32" height="0.8" fill="#3f6cc4" fill-opacity="0.5"/><rect x="736.00" y="97.42" width="3.52" height="0.8" fill="#3f6cc4" fill-opacity="0.5"/><rect x="739.96" y="97.42" width="3.08" height="0.8" fill="#3f6cc4" fill-opacity="0.5"/><rect x="715.76" y="98.30" width="1.76" height="0.8" fill="#3f9e9e" fill-opacity="0.5"/><rect x="718.40" y="98.30" width="4.40" height="0.8" fill="#3f6cc4" fill-opacity="0.5"/><rect x="715.76" y="99.18" width="0.88" height="0.8" fill="#3f9e9e" fill-opacity="0.5"/><rect x="717.52" y="99.18" width="1.32" height="0.8" fill="#3f6cc4" fill-opacity="0.5"/><rect x="719.28" y="99.18" width="1.32" height="0.8" fill="#3f6cc4" fill-opacity="0.5"/><rect x="721.04" y="99.18" width="1.32" height="0.8" fill="#3f6cc4" fill-opacity="0.5"/><rect x="722.80" y="99.18" width="3.08" height="0.8" fill="#3f6cc4" fill-opacity="0.5"/><rect x="726.32" y="99.18" width="3.52" height="0.8" fill="#3f6cc4" fill-opacity="0.5"/><rect x="730.28" y="99.18" width="1.76" height="0.8" fill="#3f6cc4" fill-opacity="0.5"/><rect x="732.48" y="99.18" width="0.44" height="0.8" fill="#3f6cc4" fill-opacity="0.5"/><rect x="733.36" y="99.18" width="2.64" height="0.8" fill="#3f6cc4" fill-opacity="0.5"/><rect x="736.44" y="99.18" width="1.32" height="0.8" fill="#3f6cc4" fill-opacity="0.5"/><rect x="738.20" y="99.18" width="2.64" height="0.8" fill="#3f6cc4" fill-opacity="0.5"/><rect x="741.28" y="99.18" width="1.76" height="0.8" fill="#3f6cc4" fill-opacity="0.5"/><rect x="715.76" y="100.06" width="4.84" height="0.8" fill="#3f9e9e" fill-opacity="0.5"/><rect x="721.48" y="100.06" width="2.64" height="0.8" fill="#3f6cc4" fill-opacity="0.5"/><rect x="724.56" y="100.06" width="1.32" height="0.8" fill="#3f6cc4" fill-opacity="0.5"/><rect x="726.32" y="100.06" width="2.64" height="0.8" fill="#3f6cc4" fill-opacity="0.5"/><rect x="729.40" y="100.06" width="1.76" height="0.8" fill="#3f6cc4" fill-opacity="0.5"/><rect x="715.76" y="100.94" width="1.76" height="0.8" fill="#3f9e9e" fill-opacity="0.5"/><rect x="718.40" y="100.94" width="2.64" height="0.8" fill="#3f6cc4" fill-opacity="0.5"/><rect x="721.48" y="100.94" width="1.32" height="0.8" fill="#3f6cc4" fill-opacity="0.5"/><rect x="723.24" y="100.94" width="2.64" height="0.8" fill="#3f6cc4" fill-opacity="0.5"/><rect x="726.32" y="100.94" width="1.76" height="0.8" fill="#3f6cc4" fill-opacity="0.5"/><rect x="715.76" y="101.82" width="7.92" height="0.8" fill="#3f9e9e" fill-opacity="0.5"/><rect x="724.56" y="101.82" width="2.64" height="0.8" fill="#3f6cc4" fill-opacity="0.5"/><rect x="727.64" y="101.82" width="1.32" height="0.8" fill="#3f6cc4" fill-opacity="0.5"/><rect x="729.40" y="101.82" width="2.64" height="0.8" fill="#3f6cc4" fill-opacity="0.5"/><rect x="732.48" y="101.82" width="1.76" height="0.8" fill="#3f6cc4" fill-opacity="0.5"/><rect x="715.76" y="102.70" width="3.08" height="0.8" fill="#3f9e9e" fill-opacity="0.5"/><rect x="719.72" y="102.70" width="2.20" height="0.8" fill="#3f6cc4" fill-opacity="0.5"/><rect x="715.76" y="103.58" width="10.56" height="0.8" fill="#3f9e9e" fill-opacity="0.5"/><rect x="727.20" y="103.58" width="1.32" height="0.8" fill="#3f6cc4" fill-opacity="0.5"/><rect x="728.96" y="103.58" width="1.32" height="0.8" fill="#3f6cc4" fill-opacity="0.5"/><rect x="730.72" y="103.58" width="1.32" height="0.8" fill="#3f6cc4" fill-opacity="0.5"/><rect x="732.48" y="103.58" width="2.64" height="0.8" fill="#3f6cc4" fill-opacity="0.5"/><rect x="735.56" y="103.58" width="4.40" height="0.8" fill="#3f6cc4" fill-opacity="0.5"/><rect x="740.40" y="103.58" width="4.84" height="0.8" fill="#3f6cc4" fill-opacity="0.5"/><rect x="745.68" y="103.58" width="0.44" height="0.8" fill="#3f6cc4" fill-opacity="0.5"/><rect x="715.76" y="104.46" width="7.48" height="0.8" fill="#3f9e9e" fill-opacity="0.5"/><rect x="724.12" y="104.46" width="1.32" height="0.8" fill="#3f6cc4" fill-opacity="0.5"/><rect x="725.88" y="104.46" width="1.32" height="0.8" fill="#3f6cc4" fill-opacity="0.5"/><rect x="727.64" y="104.46" width="1.32" height="0.8" fill="#3f6cc4" fill-opacity="0.5"/><rect x="729.40" y="104.46" width="2.64" height="0.8" fill="#3f6cc4" fill-opacity="0.5"/><rect x="732.48" y="104.46" width="4.40" height="0.8" fill="#3f6cc4" fill-opacity="0.5"/><rect x="737.32" y="104.46" width="3.52" height="0.8" fill="#3f6cc4" fill-opacity="0.5"/><rect x="741.28" y="104.46" width="2.20" height="0.8" fill="#3f6cc4" fill-opacity="0.5"/><rect x="715.76" y="105.34" width="3.96" height="0.8" fill="#3f9e9e" fill-opacity="0.5"/><rect x="718.40" y="106.22" width="1.32" height="0.8" fill="#3f6cc4" fill-opacity="0.5"/><rect x="720.16" y="106.22" width="1.32" height="0.8" fill="#3f6cc4" fill-opacity="0.5"/><rect x="721.92" y="106.22" width="1.32" height="0.8" fill="#3f6cc4" fill-opacity="0.5"/><rect x="723.68" y="106.22" width="3.08" height="0.8" fill="#3f6cc4" fill-opacity="0.5"/><rect x="727.20" y="106.22" width="3.52" height="0.8" fill="#3f6cc4" fill-opacity="0.5"/><rect x="731.16" y="106.22" width="1.76" height="0.8" fill="#3f6cc4" fill-opacity="0.5"/><rect x="733.36" y="106.22" width="0.44" height="0.8" fill="#3f6cc4" fill-opacity="0.5"/><rect x="734.24" y="106.22" width="1.32" height="0.8" fill="#3f6cc4" fill-opacity="0.5"/><rect x="736.00" y="106.22" width="6.16" height="0.8" fill="#3f6cc4" fill-opacity="0.5"/><rect x="742.60" y="106.22" width="3.52" height="0.8" fill="#3f6cc4" fill-opacity="0.5"/><rect x="715.76" y="107.10" width="3.52" height="0.8" fill="#3f9e9e" fill-opacity="0.5"/><rect x="720.16" y="107.10" width="2.64" height="0.8" fill="#3f6cc4" fill-opacity="0.5"/><rect x="715.76" y="107.98" width="4.40" height="0.8" fill="#3f9e9e" fill-opacity="0.5"/><rect x="721.04" y="107.98" width="2.64" height="0.8" fill="#3f6cc4" fill-opacity="0.5"/><rect x="715.76" y="108.86" width="6.16" height="0.8" fill="#3f9e9e" fill-opacity="0.5"/><rect x="722.80" y="108.86" width="1.32" height="0.8" fill="#3f6cc4" fill-opacity="0.5"/><rect x="715.76" y="109.74" width="5.28" height="0.8" fill="#3f9e9e" fill-opacity="0.5"/><rect x="721.92" y="109.74" width="1.76" height="0.8" fill="#3f6cc4" fill-opacity="0.5"/><rect x="724.12" y="109.74" width="0.88" height="0.8" fill="#3f6cc4" fill-opacity="0.5"/><rect x="725.44" y="109.74" width="2.20" height="0.8" fill="#3f6cc4" fill-opacity="0.5"/><rect x="728.08" y="109.74" width="0.88" height="0.8" fill="#3f6cc4" fill-opacity="0.5"/><rect x="729.40" y="109.74" width="1.32" height="0.8" fill="#3f6cc4" fill-opacity="0.5"/><rect x="715.76" y="110.62" width="3.96" height="0.8" fill="#3f9e9e" fill-opacity="0.5"/><rect x="720.60" y="110.62" width="1.76" height="0.8" fill="#3f6cc4" fill-opacity="0.5"/><rect x="722.80" y="110.62" width="0.88" height="0.8" fill="#3f6cc4" fill-opacity="0.5"/><rect x="724.12" y="110.62" width="2.20" height="0.8" fill="#3f6cc4" fill-opacity="0.5"/><rect x="726.76" y="110.62" width="0.88" height="0.8" fill="#3f6cc4" fill-opacity="0.5"/><rect x="728.08" y="110.62" width="1.32" height="0.8" fill="#3f6cc4" fill-opacity="0.5"/><rect x="715.76" y="111.50" width="5.28" height="0.8" fill="#3f9e9e" fill-opacity="0.5"/><rect x="716.64" y="112.38" width="2.64" height="0.8" fill="#3f9e9e" fill-opacity="0.5"/><rect x="718.40" y="113.26" width="1.76" height="0.8" fill="#3f9e9e" fill-opacity="0.5"/><rect x="721.04" y="113.26" width="4.84" height="0.8" fill="#3f6cc4" fill-opacity="0.5"/><rect x="718.40" y="114.14" width="3.52" height="0.8" fill="#3f9e9e" fill-opacity="0.5"/><rect x="722.80" y="114.14" width="2.64" height="0.8" fill="#3f6cc4" fill-opacity="0.5"/><rect x="718.40" y="115.02" width="4.84" height="0.8" fill="#3f9e9e" fill-opacity="0.5"/><rect x="724.12" y="115.02" width="2.64" height="0.8" fill="#3f6cc4" fill-opacity="0.5"/><rect x="727.20" y="115.02" width="4.84" height="0.8" fill="#3f6cc4" fill-opacity="0.5"/><rect x="718.40" y="115.90" width="4.40" height="0.8" fill="#3f9e9e" fill-opacity="0.5"/><rect x="723.68" y="115.90" width="3.52" height="0.8" fill="#3f6cc4" fill-opacity="0.5"/><rect x="718.40" y="116.78" width="1.76" height="0.8" fill="#3f9e9e" fill-opacity="0.5"/><rect x="721.04" y="116.78" width="4.40" height="0.8" fill="#3f6cc4" fill-opacity="0.5"/><rect x="718.40" y="117.66" width="3.52" height="0.8" fill="#3f9e9e" fill-opacity="0.5"/><rect x="722.80" y="117.66" width="2.64" height="0.8" fill="#3f6cc4" fill-opacity="0.5"/><rect x="718.40" y="118.54" width="4.84" height="0.8" fill="#3f9e9e" fill-opacity="0.5"/><rect x="724.12" y="118.54" width="2.64" height="0.8" fill="#3f6cc4" fill-opacity="0.5"/><rect x="727.20" y="118.54" width="4.40" height="0.8" fill="#3f6cc4" fill-opacity="0.5"/><rect x="718.40" y="119.42" width="4.40" height="0.8" fill="#3f9e9e" fill-opacity="0.5"/><rect x="723.68" y="119.42" width="3.52" height="0.8" fill="#3f6cc4" fill-opacity="0.5"/><rect x="718.40" y="120.30" width="1.76" height="0.8" fill="#3f9e9e" fill-opacity="0.5"/><rect x="721.04" y="120.30" width="3.96" height="0.8" fill="#3f6cc4" fill-opacity="0.5"/><rect x="718.40" y="121.18" width="3.52" height="0.8" fill="#3f9e9e" fill-opacity="0.5"/><rect x="722.80" y="121.18" width="2.64" height="0.8" fill="#3f6cc4" fill-opacity="0.5"/><rect x="718.40" y="122.06" width="4.84" height="0.8" fill="#3f9e9e" fill-opacity="0.5"/><rect x="724.12" y="122.06" width="2.64" height="0.8" fill="#3f6cc4" fill-opacity="0.5"/><rect x="727.20" y="122.06" width="3.96" height="0.8" fill="#3f6cc4" fill-opacity="0.5"/><rect x="718.40" y="122.94" width="4.40" height="0.8" fill="#3f9e9e" fill-opacity="0.5"/><rect x="723.68" y="122.94" width="3.52" height="0.8" fill="#3f6cc4" fill-opacity="0.5"/><rect x="718.40" y="123.82" width="1.76" height="0.8" fill="#3f9e9e" fill-opacity="0.5"/><rect x="721.04" y="123.82" width="2.20" height="0.8" fill="#3f6cc4" fill-opacity="0.5"/><rect x="718.40" y="124.70" width="3.52" height="0.8" fill="#3f9e9e" fill-opacity="0.5"/><rect x="722.80" y="124.70" width="2.64" height="0.8" fill="#3f6cc4" fill-opacity="0.5"/><rect x="718.40" y="125.58" width="4.84" height="0.8" fill="#3f9e9e" fill-opacity="0.5"/><rect x="724.12" y="125.58" width="2.64" height="0.8" fill="#3f6cc4" fill-opacity="0.5"/><rect x="727.20" y="125.58" width="2.20" height="0.8" fill="#3f6cc4" fill-opacity="0.5"/><rect x="718.40" y="126.46" width="4.40" height="0.8" fill="#3f9e9e" fill-opacity="0.5"/><rect x="723.68" y="126.46" width="3.52" height="0.8" fill="#3f6cc4" fill-opacity="0.5"/><rect x="718.40" y="127.34" width="1.76" height="0.8" fill="#3f9e9e" fill-opacity="0.5"/><rect x="721.04" y="127.34" width="4.40" height="0.8" fill="#3f6cc4" fill-opacity="0.5"/><rect x="718.40" y="128.22" width="3.52" height="0.8" fill="#3f9e9e" fill-opacity="0.5"/><rect x="722.80" y="128.22" width="2.64" height="0.8" fill="#3f6cc4" fill-opacity="0.5"/><rect x="718.40" y="129.10" width="4.84" height="0.8" fill="#3f9e9e" fill-opacity="0.5"/><rect x="724.12" y="129.10" width="2.64" height="0.8" fill="#3f6cc4" fill-opacity="0.5"/><rect x="727.20" y="129.10" width="4.40" height="0.8" fill="#3f6cc4" fill-opacity="0.5"/><rect x="718.40" y="129.98" width="4.40" height="0.8" fill="#3f9e9e" fill-opacity="0.5"/><rect x="723.68" y="129.98" width="3.52" height="0.8" fill="#3f6cc4" fill-opacity="0.5"/><rect x="718.40" y="130.86" width="1.76" height="0.8" fill="#3f9e9e" fill-opacity="0.5"/><rect x="721.04" y="130.86" width="3.08" height="0.8" fill="#3f6cc4" fill-opacity="0.5"/><rect x="718.40" y="131.74" width="3.52" height="0.8" fill="#3f9e9e" fill-opacity="0.5"/><rect x="722.80" y="131.74" width="2.64" height="0.8" fill="#3f6cc4" fill-opacity="0.5"/><rect x="718.40" y="132.62" width="4.84" height="0.8" fill="#3f9e9e" fill-opacity="0.5"/><rect x="724.12" y="132.62" width="2.64" height="0.8" fill="#3f6cc4" fill-opacity="0.5"/><rect x="727.20" y="132.62" width="3.08" height="0.8" fill="#3f6cc4" fill-opacity="0.5"/><rect x="718.40" y="133.50" width="4.40" height="0.8" fill="#3f9e9e" fill-opacity="0.5"/><rect x="723.68" y="133.50" width="3.52" height="0.8" fill="#3f6cc4" fill-opacity="0.5"/><rect x="718.40" y="134.38" width="1.76" height="0.8" fill="#3f9e9e" fill-opacity="0.5"/><rect x="721.04" y="134.38" width="4.40" height="0.8" fill="#3f6cc4" fill-opacity="0.5"/><rect x="718.40" y="135.26" width="3.52" height="0.8" fill="#3f9e9e" fill-opacity="0.5"/><rect x="722.80" y="135.26" width="2.64" height="0.8" fill="#3f6cc4" fill-opacity="0.5"/><rect x="718.40" y="136.14" width="4.84" height="0.8" fill="#3f9e9e" fill-opacity="0.5"/><rect x="724.12" y="136.14" width="2.64" height="0.8" fill="#3f6cc4" fill-opacity="0.5"/><rect x="727.20" y="136.14" width="4.40" height="0.8" fill="#3f6cc4" fill-opacity="0.5"/><rect x="718.40" y="137.02" width="4.40" height="0.8" fill="#3f9e9e" fill-opacity="0.5"/><rect x="723.68" y="137.02" width="3.52" height="0.8" fill="#3f6cc4" fill-opacity="0.5"/><rect x="718.40" y="137.90" width="1.76" height="0.8" fill="#3f9e9e" fill-opacity="0.5"/><rect x="721.04" y="137.90" width="3.08" height="0.8" fill="#3f6cc4" fill-opacity="0.5"/><rect x="718.40" y="138.78" width="3.52" height="0.8" fill="#3f9e9e" fill-opacity="0.5"/><rect x="722.80" y="138.78" width="2.64" height="0.8" fill="#3f6cc4" fill-opacity="0.5"/><rect x="718.40" y="139.66" width="4.84" height="0.8" fill="#3f9e9e" fill-opacity="0.5"/><rect x="724.12" y="139.66" width="2.64" height="0.8" fill="#3f6cc4" fill-opacity="0.5"/><rect x="727.20" y="139.66" width="3.08" height="0.8" fill="#3f6cc4" fill-opacity="0.5"/><rect x="718.40" y="140.54" width="4.40" height="0.8" fill="#3f9e9e" fill-opacity="0.5"/><rect x="723.68" y="140.54" width="3.52" height="0.8" fill="#3f6cc4" fill-opacity="0.5"/><rect x="718.40" y="141.42" width="1.76" height="0.8" fill="#3f9e9e" fill-opacity="0.5"/><rect x="721.04" y="141.42" width="2.64" height="0.8" fill="#3f6cc4" fill-opacity="0.5"/><rect x="718.40" y="142.30" width="3.52" height="0.8" fill="#3f9e9e" fill-opacity="0.5"/><rect x="722.80" y="142.30" width="2.64" height="0.8" fill="#3f6cc4" fill-opacity="0.5"/><rect x="718.40" y="143.18" width="4.84" height="0.8" fill="#3f9e9e" fill-opacity="0.5"/><rect x="724.12" y="143.18" width="2.64" height="0.8" fill="#3f6cc4" fill-opacity="0.5"/><rect x="727.20" y="143.18" width="2.64" height="0.8" fill="#3f6cc4" fill-opacity="0.5"/><rect x="718.40" y="144.06" width="4.40" height="0.8" fill="#3f9e9e" fill-opacity="0.5"/><rect x="723.68" y="144.06" width="3.52" height="0.8" fill="#3f6cc4" fill-opacity="0.5"/><rect x="718.40" y="144.94" width="1.76" height="0.8" fill="#3f9e9e" fill-opacity="0.5"/><rect x="721.04" y="144.94" width="1.32" height="0.8" fill="#3f6cc4" fill-opacity="0.5"/><rect x="718.40" y="145.82" width="3.52" height="0.8" fill="#3f9e9e" fill-opacity="0.5"/><rect x="722.80" y="145.82" width="2.64" height="0.8" fill="#3f6cc4" fill-opacity="0.5"/><rect x="718.40" y="146.70" width="4.84" height="0.8" fill="#3f9e9e" fill-opacity="0.5"/><rect x="724.12" y="146.70" width="2.64" height="0.8" fill="#3f6cc4" fill-opacity="0.5"/><rect x="727.20" y="146.70" width="1.32" height="0.8" fill="#3f6cc4" fill-opacity="0.5"/><rect x="718.40" y="147.58" width="4.40" height="0.8" fill="#3f9e9e" fill-opacity="0.5"/><rect x="723.68" y="147.58" width="3.52" height="0.8" fill="#3f6cc4" fill-opacity="0.5"/><rect x="718.40" y="148.46" width="1.76" height="0.8" fill="#3f9e9e" fill-opacity="0.5"/><rect x="721.04" y="148.46" width="1.76" height="0.8" fill="#3f6cc4" fill-opacity="0.5"/><rect x="718.40" y="149.34" width="3.52" height="0.8" fill="#3f9e9e" fill-opacity="0.5"/><rect x="722.80" y="149.34" width="2.64" height="0.8" fill="#3f6cc4" fill-opacity="0.5"/><rect x="718.40" y="150.22" width="4.84" height="0.8" fill="#3f9e9e" fill-opacity="0.5"/><rect x="724.12" y="150.22" width="2.64" height="0.8" fill="#3f6cc4" fill-opacity="0.5"/><rect x="727.20" y="150.22" width="1.76" height="0.8" fill="#3f6cc4" fill-opacity="0.5"/><rect x="718.40" y="151.10" width="4.40" height="0.8" fill="#3f9e9e" fill-opacity="0.5"/><rect x="723.68" y="151.10" width="3.52" height="0.8" fill="#3f6cc4" fill-opacity="0.5"/><rect x="718.40" y="151.98" width="1.76" height="0.8" fill="#3f9e9e" fill-opacity="0.5"/><rect x="721.04" y="151.98" width="1.32" height="0.8" fill="#3f6cc4" fill-opacity="0.5"/><rect x="718.40" y="152.86" width="3.52" height="0.8" fill="#3f9e9e" fill-opacity="0.5"/><rect x="722.80" y="152.86" width="2.64" height="0.8" fill="#3f6cc4" fill-opacity="0.5"/><rect x="718.40" y="153.74" width="4.84" height="0.8" fill="#3f9e9e" fill-opacity="0.5"/><rect x="724.12" y="153.74" width="2.64" height="0.8" fill="#3f6cc4" fill-opacity="0.5"/><rect x="727.20" y="153.74" width="1.32" height="0.8" fill="#3f6cc4" fill-opacity="0.5"/><rect x="718.40" y="154.62" width="4.40" height="0.8" fill="#3f9e9e" fill-opacity="0.5"/><rect x="723.68" y="154.62" width="3.52" height="0.8" fill="#3f6cc4" fill-opacity="0.5"/><rect x="718.40" y="155.50" width="1.76" height="0.8" fill="#3f9e9e" fill-opacity="0.5"/><rect x="721.04" y="155.50" width="2.20" height="0.8" fill="#3f6cc4" fill-opacity="0.5"/><rect x="718.40" y="156.38" width="3.52" height="0.8" fill="#3f9e9e" fill-opacity="0.5"/><rect x="722.80" y="156.38" width="2.64" height="0.8" fill="#3f6cc4" fill-opacity="0.5"/><rect x="718.40" y="157.26" width="4.84" height="0.8" fill="#3f9e9e" fill-opacity="0.5"/><rect x="724.12" y="157.26" width="2.64" height="0.8" fill="#3f6cc4" fill-opacity="0.5"/><rect x="727.20" y="157.26" width="2.20" height="0.8" fill="#3f6cc4" fill-opacity="0.5"/><rect x="718.40" y="158.14" width="4.40" height="0.8" fill="#3f9e9e" fill-opacity="0.5"/><rect x="723.68" y="158.14" width="3.52" height="0.8" fill="#3f6cc4" fill-opacity="0.5"/><rect x="718.40" y="159.02" width="1.76" height="0.8" fill="#3f9e9e" fill-opacity="0.5"/><rect x="721.04" y="159.02" width="2.64" height="0.8" fill="#3f6cc4" fill-opacity="0.5"/><rect x="718.40" y="159.90" width="3.52" height="0.8" fill="#3f9e9e" fill-opacity="0.5"/><rect x="722.80" y="159.90" width="2.64" height="0.8" fill="#3f6cc4" fill-opacity="0.5"/><rect x="718.40" y="160.78" width="4.84" height="0.8" fill="#3f9e9e" fill-opacity="0.5"/><rect x="724.12" y="160.78" width="2.64" height="0.8" fill="#3f6cc4" fill-opacity="0.5"/><rect x="727.20" y="160.78" width="2.64" height="0.8" fill="#3f6cc4" fill-opacity="0.5"/><rect x="718.40" y="161.66" width="4.40" height="0.8" fill="#3f9e9e" fill-opacity="0.5"/><rect x="723.68" y="161.66" width="3.52" height="0.8" fill="#3f6cc4" fill-opacity="0.5"/><rect x="718.40" y="162.54" width="1.76" height="0.8" fill="#3f9e9e" fill-opacity="0.5"/><rect x="721.04" y="162.54" width="2.64" height="0.8" fill="#3f6cc4" fill-opacity="0.5"/><rect x="718.40" y="163.42" width="3.52" height="0.8" fill="#3f9e9e" fill-opacity="0.5"/><rect x="722.80" y="163.42" width="2.64" height="0.8" fill="#3f6cc4" fill-opacity="0.5"/><rect x="718.40" y="164.30" width="4.84" height="0.8" fill="#3f9e9e" fill-opacity="0.5"/><rect x="724.12" y="164.30" width="2.64" height="0.8" fill="#3f6cc4" fill-opacity="0.5"/><rect x="727.20" y="164.30" width="2.64" height="0.8" fill="#3f6cc4" fill-opacity="0.5"/><rect x="718.40" y="165.18" width="4.40" height="0.8" fill="#3f9e9e" fill-opacity="0.5"/><rect x="723.68" y="165.18" width="3.52" height="0.8" fill="#3f6cc4" fill-opacity="0.5"/><rect x="718.40" y="166.06" width="1.76" height="0.8" fill="#3f9e9e" fill-opacity="0.5"/><rect x="721.04" y="166.06" width="4.40" height="0.8" fill="#3f6cc4" fill-opacity="0.5"/><rect x="718.40" y="166.94" width="3.52" height="0.8" fill="#3f9e9e" fill-opacity="0.5"/><rect x="722.80" y="166.94" width="2.64" height="0.8" fill="#3f6cc4" fill-opacity="0.5"/><rect x="718.40" y="167.82" width="4.84" height="0.8" fill="#3f9e9e" fill-opacity="0.5"/><rect x="724.12" y="167.82" width="2.64" height="0.8" fill="#3f6cc4" fill-opacity="0.5"/><rect x="727.20" y="167.82" width="4.40" height="0.8" fill="#3f6cc4" fill-opacity="0.5"/><rect x="718.40" y="168.70" width="4.40" height="0.8" fill="#3f9e9e" fill-opacity="0.5"/><rect x="723.68" y="168.70" width="3.52" height="0.8" fill="#3f6cc4" fill-opacity="0.5"/><rect x="718.40" y="169.58" width="1.76" height="0.8" fill="#3f9e9e" fill-opacity="0.5"/><rect x="721.04" y="169.58" width="2.20" height="0.8" fill="#3f6cc4" fill-opacity="0.5"/><rect x="718.40" y="170.46" width="3.52" height="0.8" fill="#3f9e9e" fill-opacity="0.5"/><rect x="722.80" y="170.46" width="2.64" height="0.8" fill="#3f6cc4" fill-opacity="0.5"/><rect x="718.40" y="171.34" width="4.84" height="0.8" fill="#3f9e9e" fill-opacity="0.5"/><rect x="724.12" y="171.34" width="2.64" height="0.8" fill="#3f6cc4" fill-opacity="0.5"/><rect x="727.20" y="171.34" width="2.20" height="0.8" fill="#3f6cc4" fill-opacity="0.5"/><rect x="718.40" y="172.22" width="4.40" height="0.8" fill="#3f9e9e" fill-opacity="0.5"/><rect x="723.68" y="172.22" width="3.52" height="0.8" fill="#3f6cc4" fill-opacity="0.5"/><rect x="718.40" y="173.10" width="1.76" height="0.8" fill="#3f9e9e" fill-opacity="0.5"/><rect x="721.04" y="173.10" width="3.08" height="0.8" fill="#3f6cc4" fill-opacity="0.5"/><rect x="718.40" y="173.98" width="3.52" height="0.8" fill="#3f9e9e" fill-opacity="0.5"/><rect x="722.80" y="173.98" width="2.64" height="0.8" fill="#3f6cc4" fill-opacity="0.5"/><rect x="718.40" y="174.86" width="4.84" height="0.8" fill="#3f9e9e" fill-opacity="0.5"/><rect x="724.12" y="174.86" width="2.64" height="0.8" fill="#3f6cc4" fill-opacity="0.5"/><rect x="727.20" y="174.86" width="3.08" height="0.8" fill="#3f6cc4" fill-opacity="0.5"/><rect x="718.40" y="175.74" width="4.40" height="0.8" fill="#3f9e9e" fill-opacity="0.5"/><rect x="723.68" y="175.74" width="3.52" height="0.8" fill="#3f6cc4" fill-opacity="0.5"/><rect x="716.64" y="176.62" width="7.92" height="0.8" fill="#3f9e9e" fill-opacity="0.5"/><rect x="725.44" y="176.62" width="1.76" height="0.8" fill="#3f6cc4" fill-opacity="0.5"/><rect x="727.64" y="176.62" width="1.32" height="0.8" fill="#3f6cc4" fill-opacity="0.5"/><rect x="729.40" y="176.62" width="3.52" height="0.8" fill="#3f6cc4" fill-opacity="0.5"/><rect x="733.36" y="176.62" width="1.32" height="0.8" fill="#3f6cc4" fill-opacity="0.5"/><rect x="716.64" y="177.50" width="3.52" height="0.8" fill="#3f9e9e" fill-opacity="0.5"/><rect x="721.04" y="177.50" width="2.20" height="0.8" fill="#3f6cc4" fill-opacity="0.5"/><rect x="724.56" y="177.50" width="7.92" height="0.8" fill="#3f6cc4" fill-opacity="0.5"/><rect x="732.92" y="177.50" width="3.52" height="0.8" fill="#3f6cc4" fill-opacity="0.5"/><rect x="736.88" y="177.50" width="1.76" height="0.8" fill="#3f6cc4" fill-opacity="0.5"/><rect x="739.08" y="177.50" width="1.32" height="0.8" fill="#3f6cc4" fill-opacity="0.5"/><rect x="740.84" y="177.50" width="2.64" height="0.8" fill="#3f6cc4" fill-opacity="0.5"/><rect x="743.92" y="177.50" width="1.76" height="0.8" fill="#3f6cc4" fill-opacity="0.5"/><rect x="746.12" y="177.50" width="0.88" height="0.8" fill="#3f6cc4" fill-opacity="0.5"/><rect x="747.44" y="177.50" width="2.20" height="0.8" fill="#3f6cc4" fill-opacity="0.5"/><rect x="716.64" y="178.38" width="1.32" height="0.8" fill="#3f9e9e" fill-opacity="0.5"/><rect x="717.52" y="179.26" width="7.04" height="0.8" fill="#3f9e9e" fill-opacity="0.5"/><rect x="725.44" y="179.26" width="0.44" height="0.8" fill="#3f6cc4" fill-opacity="0.5"/><rect x="726.32" y="179.26" width="1.32" height="0.8" fill="#3f6cc4" fill-opacity="0.5"/><rect x="717.52" y="180.14" width="4.40" height="0.8" fill="#3f9e9e" fill-opacity="0.5"/><rect x="722.80" y="180.14" width="0.44" height="0.8" fill="#3f6cc4" fill-opacity="0.5"/><rect x="723.68" y="180.14" width="1.32" height="0.8" fill="#3f6cc4" fill-opacity="0.5"/><rect x="717.52" y="181.02" width="2.64" height="0.8" fill="#3f9e9e" fill-opacity="0.5"/><rect x="721.04" y="181.02" width="1.76" height="0.8" fill="#3f6cc4" fill-opacity="0.5"/><rect x="715.76" y="181.90" width="9.24" height="0.8" fill="#3f9e9e" fill-opacity="0.5"/><rect x="716.64" y="182.78" width="3.08" height="0.8" fill="#3f9e9e" fill-opacity="0.5"/><rect x="720.60" y="182.78" width="3.96" height="0.8" fill="#3f6cc4" fill-opacity="0.5"/><rect x="716.64" y="183.66" width="3.08" height="0.8" fill="#3f9e9e" fill-opacity="0.5"/><rect x="720.60" y="183.66" width="1.76" height="0.8" fill="#3f6cc4" fill-opacity="0.5"/><rect x="716.64" y="184.54" width="3.52" height="0.8" fill="#3f9e9e" fill-opacity="0.5"/><rect x="721.04" y="184.54" width="3.52" height="0.8" fill="#3f6cc4" fill-opacity="0.5"/><rect x="716.64" y="185.42" width="5.72" height="0.8" fill="#3f9e9e" fill-opacity="0.5"/><rect x="723.24" y="185.42" width="1.76" height="0.8" fill="#3f6cc4" fill-opacity="0.5"/><rect x="725.44" y="185.42" width="3.52" height="0.8" fill="#3f6cc4" fill-opacity="0.5"/><rect x="729.40" y="185.42" width="1.32" height="0.8" fill="#3f6cc4" fill-opacity="0.5"/><rect x="731.16" y="185.42" width="3.96" height="0.8" fill="#3f6cc4" fill-opacity="0.5"/><rect x="735.56" y="185.42" width="1.32" height="0.8" fill="#3f6cc4" fill-opacity="0.5"/><rect x="737.32" y="185.42" width="1.32" height="0.8" fill="#3f6cc4" fill-opacity="0.5"/><rect x="739.08" y="185.42" width="3.08" height="0.8" fill="#3f6cc4" fill-opacity="0.5"/><rect x="742.60" y="185.42" width="1.76" height="0.8" fill="#3f6cc4" fill-opacity="0.5"/><rect x="716.64" y="186.30" width="4.84" height="0.8" fill="#3f9e9e" fill-opacity="0.5"/><rect x="722.36" y="186.30" width="1.76" height="0.8" fill="#3f6cc4" fill-opacity="0.5"/><rect x="716.64" y="187.18" width="3.96" height="0.8" fill="#3f9e9e" fill-opacity="0.5"/><rect x="721.48" y="187.18" width="0.44" height="0.8" fill="#3f6cc4" fill-opacity="0.5"/><rect x="722.36" y="187.18" width="2.20" height="0.8" fill="#3f6cc4" fill-opacity="0.5"/><rect x="716.64" y="188.06" width="6.60" height="0.8" fill="#3f9e9e" fill-opacity="0.5"/><rect x="724.12" y="188.06" width="4.40" height="0.8" fill="#3f6cc4" fill-opacity="0.5"/><rect x="715.76" y="188.94" width="1.76" height="0.8" fill="#3f9e9e" fill-opacity="0.5"/><rect x="715.76" y="189.82" width="4.40" height="0.8" fill="#3f9e9e" fill-opacity="0.5"/><rect x="715.76" y="190.70" width="6.60" height="0.8" fill="#3f9e9e" fill-opacity="0.5"/><rect x="715.76" y="191.58" width="3.52" height="0.8" fill="#3f9e9e" fill-opacity="0.5"/><rect x="716.64" y="192.46" width="4.84" height="0.8" fill="#3f9e9e" fill-opacity="0.5"/><rect x="722.36" y="192.46" width="7.92" height="0.8" fill="#3f6cc4" fill-opacity="0.5"/><rect x="716.64" y="193.34" width="2.20" height="0.8" fill="#3f9e9e" fill-opacity="0.5"/><rect x="719.72" y="193.34" width="3.08" height="0.8" fill="#3f6cc4" fill-opacity="0.5"/><rect x="715.76" y="194.22" width="1.76" height="0.8" fill="#3f9e9e" fill-opacity="0.5"/><rect x="718.40" y="194.22" width="3.08" height="0.8" fill="#3f6cc4" fill-opacity="0.5"/><rect x="715.76" y="195.10" width="0.88" height="0.8" fill="#3f9e9e" fill-opacity="0.5"/><rect x="717.52" y="195.10" width="1.32" height="0.8" fill="#3f6cc4" fill-opacity="0.5"/><rect x="719.28" y="195.10" width="1.32" height="0.8" fill="#3f6cc4" fill-opacity="0.5"/><rect x="721.04" y="195.10" width="1.32" height="0.8" fill="#3f6cc4" fill-opacity="0.5"/><rect x="722.80" y="195.10" width="3.08" height="0.8" fill="#3f6cc4" fill-opacity="0.5"/><rect x="726.32" y="195.10" width="3.52" height="0.8" fill="#3f6cc4" fill-opacity="0.5"/><rect x="730.28" y="195.10" width="1.76" height="0.8" fill="#3f6cc4" fill-opacity="0.5"/><rect x="732.48" y="195.10" width="0.44" height="0.8" fill="#3f6cc4" fill-opacity="0.5"/><rect x="733.36" y="195.10" width="1.32" height="0.8" fill="#3f6cc4" fill-opacity="0.5"/><rect x="735.12" y="195.10" width="3.52" height="0.8" fill="#3f6cc4" fill-opacity="0.5"/><rect x="739.08" y="195.10" width="3.08" height="0.8" fill="#3f6cc4" fill-opacity="0.5"/><rect x="715.76" y="195.98" width="4.84" height="0.8" fill="#3f9e9e" fill-opacity="0.5"/><rect x="721.48" y="195.98" width="1.32" height="0.8" fill="#3f6cc4" fill-opacity="0.5"/><rect x="723.24" y="195.98" width="3.52" height="0.8" fill="#3f6cc4" fill-opacity="0.5"/><rect x="727.20" y="195.98" width="3.08" height="0.8" fill="#3f6cc4" fill-opacity="0.5"/><rect x="715.76" y="196.86" width="1.76" height="0.8" fill="#3f9e9e" fill-opacity="0.5"/><rect x="718.40" y="196.86" width="1.32" height="0.8" fill="#3f6cc4" fill-opacity="0.5"/><rect x="720.16" y="196.86" width="3.52" height="0.8" fill="#3f6cc4" fill-opacity="0.5"/><rect x="724.12" y="196.86" width="3.08" height="0.8" fill="#3f6cc4" fill-opacity="0.5"/><rect x="715.76" y="197.74" width="7.92" height="0.8" fill="#3f9e9e" fill-opacity="0.5"/><rect x="724.56" y="197.74" width="1.32" height="0.8" fill="#3f6cc4" fill-opacity="0.5"/><rect x="726.32" y="197.74" width="3.52" height="0.8" fill="#3f6cc4" fill-opacity="0.5"/><rect x="730.28" y="197.74" width="3.08" height="0.8" fill="#3f6cc4" fill-opacity="0.5"/><rect x="715.76" y="198.62" width="3.08" height="0.8" fill="#3f9e9e" fill-opacity="0.5"/><rect x="719.72" y="198.62" width="2.20" height="0.8" fill="#3f6cc4" fill-opacity="0.5"/><rect x="715.76" y="199.50" width="10.56" height="0.8" fill="#3f9e9e" fill-opacity="0.5"/><rect x="727.20" y="199.50" width="1.32" height="0.8" fill="#3f6cc4" fill-opacity="0.5"/><rect x="728.96" y="199.50" width="1.32" height="0.8" fill="#3f6cc4" fill-opacity="0.5"/><rect x="730.72" y="199.50" width="1.32" height="0.8" fill="#3f6cc4" fill-opacity="0.5"/><rect x="732.48" y="199.50" width="1.32" height="0.8" fill="#3f6cc4" fill-opacity="0.5"/><rect x="734.24" y="199.50" width="3.08" height="0.8" fill="#3f6cc4" fill-opacity="0.5"/><rect x="737.76" y="199.50" width="4.84" height="0.8" fill="#3f6cc4" fill-opacity="0.5"/><rect x="743.04" y="199.50" width="0.44" height="0.8" fill="#3f6cc4" fill-opacity="0.5"/><rect x="715.76" y="200.38" width="7.48" height="0.8" fill="#3f9e9e" fill-opacity="0.5"/><rect x="724.12" y="200.38" width="1.32" height="0.8" fill="#3f6cc4" fill-opacity="0.5"/><rect x="725.88" y="200.38" width="1.32" height="0.8" fill="#3f6cc4" fill-opacity="0.5"/><rect x="727.64" y="200.38" width="1.32" height="0.8" fill="#3f6cc4" fill-opacity="0.5"/><rect x="729.40" y="200.38" width="1.32" height="0.8" fill="#3f6cc4" fill-opacity="0.5"/><rect x="731.16" y="200.38" width="3.08" height="0.8" fill="#3f6cc4" fill-opacity="0.5"/><rect x="734.68" y="200.38" width="3.52" height="0.8" fill="#3f6cc4" fill-opacity="0.5"/><rect x="738.64" y="200.38" width="2.20" height="0.8" fill="#3f6cc4" fill-opacity="0.5"/><rect x="715.76" y="201.26" width="3.96" height="0.8" fill="#3f9e9e" fill-opacity="0.5"/><rect x="715.76" y="202.14" width="3.52" height="0.8" fill="#3f9e9e" fill-opacity="0.5"/><rect x="720.16" y="202.14" width="1.32" height="0.8" fill="#3f6cc4" fill-opacity="0.5"/><rect x="715.76" y="203.02" width="4.40" height="0.8" fill="#3f9e9e" fill-opacity="0.5"/><rect x="721.04" y="203.02" width="1.32" height="0.8" fill="#3f6cc4" fill-opacity="0.5"/><rect x="715.76" y="203.90" width="4.84" height="0.8" fill="#3f9e9e" fill-opacity="0.5"/><rect x="721.48" y="203.90" width="2.20" height="0.8" fill="#3f6cc4" fill-opacity="0.5"/><rect x="715.76" y="204.78" width="1.76" height="0.8" fill="#3f9e9e" fill-opacity="0.5"/><rect x="715.76" y="205.66" width="3.52" height="0.8" fill="#3f9e9e" fill-opacity="0.5"/><rect x="716.64" y="206.54" width="2.64" height="0.8" fill="#3f9e9e" fill-opacity="0.5"/><rect x="720.16" y="206.54" width="3.52" height="0.8" fill="#3f6cc4" fill-opacity="0.5"/><rect x="724.12" y="206.54" width="1.76" height="0.8" fill="#3f6cc4" fill-opacity="0.5"/><rect x="726.32" y="206.54" width="3.52" height="0.8" fill="#3f6cc4" fill-opacity="0.5"/><rect x="716.64" y="207.42" width="2.64" height="0.8" fill="#3f9e9e" fill-opacity="0.5"/><rect x="720.16" y="207.42" width="2.64" height="0.8" fill="#3f6cc4" fill-opacity="0.5"/><rect x="723.24" y="207.42" width="2.20" height="0.8" fill="#3f6cc4" fill-opacity="0.5"/><rect x="715.76" y="208.30" width="1.76" height="0.8" fill="#3f9e9e" fill-opacity="0.5"/><rect x="718.40" y="208.30" width="3.52" height="0.8" fill="#3f6cc4" fill-opacity="0.5"/><rect x="715.76" y="209.18" width="0.88" height="0.8" fill="#3f9e9e" fill-opacity="0.5"/><rect x="717.52" y="209.18" width="1.32" height="0.8" fill="#3f6cc4" fill-opacity="0.5"/><rect x="719.28" y="209.18" width="1.32" height="0.8" fill="#3f6cc4" fill-opacity="0.5"/><rect x="721.04" y="209.18" width="1.32" height="0.8" fill="#3f6cc4" fill-opacity="0.5"/><rect x="722.80" y="209.18" width="3.08" height="0.8" fill="#3f6cc4" fill-opacity="0.5"/><rect x="726.32" y="209.18" width="3.52" height="0.8" fill="#3f6cc4" fill-opacity="0.5"/><rect x="730.28" y="209.18" width="1.76" height="0.8" fill="#3f6cc4" fill-opacity="0.5"/><rect x="732.48" y="209.18" width="0.44" height="0.8" fill="#3f6cc4" fill-opacity="0.5"/><rect x="733.36" y="209.18" width="2.20" height="0.8" fill="#3f6cc4" fill-opacity="0.5"/><rect x="736.00" y="209.18" width="1.32" height="0.8" fill="#3f6cc4" fill-opacity="0.5"/><rect x="737.76" y="209.18" width="3.52" height="0.8" fill="#3f6cc4" fill-opacity="0.5"/><rect x="715.76" y="210.06" width="4.84" height="0.8" fill="#3f9e9e" fill-opacity="0.5"/><rect x="721.48" y="210.06" width="2.20" height="0.8" fill="#3f6cc4" fill-opacity="0.5"/><rect x="724.12" y="210.06" width="1.32" height="0.8" fill="#3f6cc4" fill-opacity="0.5"/><rect x="725.88" y="210.06" width="3.52" height="0.8" fill="#3f6cc4" fill-opacity="0.5"/><rect x="715.76" y="210.94" width="1.76" height="0.8" fill="#3f9e9e" fill-opacity="0.5"/><rect x="718.40" y="210.94" width="2.20" height="0.8" fill="#3f6cc4" fill-opacity="0.5"/><rect x="721.04" y="210.94" width="1.32" height="0.8" fill="#3f6cc4" fill-opacity="0.5"/><rect x="722.80" y="210.94" width="3.52" height="0.8" fill="#3f6cc4" fill-opacity="0.5"/><rect x="715.76" y="211.82" width="7.92" height="0.8" fill="#3f9e9e" fill-opacity="0.5"/><rect x="724.56" y="211.82" width="2.20" height="0.8" fill="#3f6cc4" fill-opacity="0.5"/><rect x="727.20" y="211.82" width="1.32" height="0.8" fill="#3f6cc4" fill-opacity="0.5"/><rect x="728.96" y="211.82" width="3.52" height="0.8" fill="#3f6cc4" fill-opacity="0.5"/><rect x="715.76" y="212.70" width="3.08" height="0.8" fill="#3f9e9e" fill-opacity="0.5"/><rect x="719.72" y="212.70" width="2.20" height="0.8" fill="#3f6cc4" fill-opacity="0.5"/><rect x="715.76" y="213.58" width="10.56" height="0.8" fill="#3f9e9e" fill-opacity="0.5"/><rect x="727.20" y="213.58" width="1.32" height="0.8" fill="#3f6cc4" fill-opacity="0.5"/><rect x="728.96" y="213.58" width="1.32" height="0.8" fill="#3f6cc4" fill-opacity="0.5"/><rect x="730.72" y="213.58" width="1.32" height="0.8" fill="#3f6cc4" fill-opacity="0.5"/><rect x="732.48" y="213.58" width="1.32" height="0.8" fill="#3f6cc4" fill-opacity="0.5"/><rect x="734.24" y="213.58" width="1.32" height="0.8" fill="#3f6cc4" fill-opacity="0.5"/><rect x="736.00" y="213.58" width="2.20" height="0.8" fill="#3f6cc4" fill-opacity="0.5"/><rect x="738.64" y="213.58" width="4.84" height="0.8" fill="#3f6cc4" fill-opacity="0.5"/><rect x="743.92" y="213.58" width="0.44" height="0.8" fill="#3f6cc4" fill-opacity="0.5"/><rect x="715.76" y="214.46" width="7.48" height="0.8" fill="#3f9e9e" fill-opacity="0.5"/><rect x="724.12" y="214.46" width="1.32" height="0.8" fill="#3f6cc4" fill-opacity="0.5"/><rect x="725.88" y="214.46" width="1.32" height="0.8" fill="#3f6cc4" fill-opacity="0.5"/><rect x="727.64" y="214.46" width="1.32" height="0.8" fill="#3f6cc4" fill-opacity="0.5"/><rect x="729.40" y="214.46" width="1.32" height="0.8" fill="#3f6cc4" fill-opacity="0.5"/><rect x="731.16" y="214.46" width="1.32" height="0.8" fill="#3f6cc4" fill-opacity="0.5"/><rect x="732.92" y="214.46" width="2.20" height="0.8" fill="#3f6cc4" fill-opacity="0.5"/><rect x="735.56" y="214.46" width="3.52" height="0.8" fill="#3f6cc4" fill-opacity="0.5"/><rect x="739.52" y="214.46" width="3.52" height="0.8" fill="#3f6cc4" fill-opacity="0.5"/><rect x="743.48" y="214.46" width="2.20" height="0.8" fill="#3f6cc4" fill-opacity="0.5"/><rect x="715.76" y="215.34" width="3.96" height="0.8" fill="#3f9e9e" fill-opacity="0.5"/><rect x="715.76" y="216.22" width="3.52" height="0.8" fill="#3f9e9e" fill-opacity="0.5"/><rect x="720.16" y="216.22" width="1.32" height="0.8" fill="#3f6cc4" fill-opacity="0.5"/><rect x="721.92" y="216.22" width="0.88" height="0.8" fill="#3f6cc4" fill-opacity="0.5"/><rect x="723.24" y="216.22" width="1.32" height="0.8" fill="#3f6cc4" fill-opacity="0.5"/><rect x="715.76" y="217.10" width="4.40" height="0.8" fill="#3f9e9e" fill-opacity="0.5"/><rect x="721.04" y="217.10" width="2.20" height="0.8" fill="#3f6cc4" fill-opacity="0.5"/><rect x="715.76" y="217.98" width="5.28" height="0.8" fill="#3f9e9e" fill-opacity="0.5"/><rect x="721.92" y="217.98" width="2.20" height="0.8" fill="#3f6cc4" fill-opacity="0.5"/><rect x="715.76" y="218.86" width="6.16" height="0.8" fill="#3f9e9e" fill-opacity="0.5"/><rect x="722.80" y="218.86" width="5.28" height="0.8" fill="#3f6cc4" fill-opacity="0.5"/><rect x="715.76" y="219.74" width="3.52" height="0.8" fill="#3f9e9e" fill-opacity="0.5"/><rect x="716.64" y="220.62" width="3.08" height="0.8" fill="#3f9e9e" fill-opacity="0.5"/><rect x="720.60" y="220.62" width="3.52" height="0.8" fill="#3f6cc4" fill-opacity="0.5"/><rect x="724.56" y="220.62" width="1.76" height="0.8" fill="#3f6cc4" fill-opacity="0.5"/><rect x="726.76" y="220.62" width="2.20" height="0.8" fill="#3f6cc4" fill-opacity="0.5"/><rect x="716.64" y="221.50" width="1.32" height="0.8" fill="#3f9e9e" fill-opacity="0.5"/><rect x="718.84" y="221.50" width="1.32" height="0.8" fill="#3f6cc4" fill-opacity="0.5"/><rect x="721.48" y="221.50" width="3.52" height="0.8" fill="#3f6cc4" fill-opacity="0.5"/><rect x="725.44" y="221.50" width="1.76" height="0.8" fill="#3f6cc4" fill-opacity="0.5"/><rect x="727.64" y="221.50" width="1.76" height="0.8" fill="#3f6cc4" fill-opacity="0.5"/><rect x="729.84" y="221.50" width="3.08" height="0.8" fill="#3f6cc4" fill-opacity="0.5"/><rect x="716.64" y="222.38" width="3.96" height="0.8" fill="#3f9e9e" fill-opacity="0.5"/><rect x="721.48" y="222.38" width="7.04" height="0.8" fill="#3f6cc4" fill-opacity="0.5"/><rect x="716.64" y="223.26" width="4.84" height="0.8" fill="#3f9e9e" fill-opacity="0.5"/><rect x="722.36" y="223.26" width="3.52" height="0.8" fill="#3f6cc4" fill-opacity="0.5"/><rect x="726.32" y="223.26" width="1.76" height="0.8" fill="#3f6cc4" fill-opacity="0.5"/><rect x="728.52" y="223.26" width="3.52" height="0.8" fill="#3f6cc4" fill-opacity="0.5"/><rect x="716.64" y="224.14" width="3.52" height="0.8" fill="#3f9e9e" fill-opacity="0.5"/><rect x="717.52" y="225.02" width="1.76" height="0.8" fill="#3f9e9e" fill-opacity="0.5"/><rect x="720.16" y="225.02" width="0.44" height="0.8" fill="#3f6cc4" fill-opacity="0.5"/><rect x="721.04" y="225.02" width="0.44" height="0.8" fill="#3f6cc4" fill-opacity="0.5"/><rect x="717.52" y="225.90" width="3.96" height="0.8" fill="#3f9e9e" fill-opacity="0.5"/><rect x="722.36" y="225.90" width="1.76" height="0.8" fill="#3f6cc4" fill-opacity="0.5"/><rect x="724.56" y="225.90" width="0.88" height="0.8" fill="#3f6cc4" fill-opacity="0.5"/><rect x="725.88" y="225.90" width="0.88" height="0.8" fill="#3f6cc4" fill-opacity="0.5"/></svg>
</div>
</body></html>
